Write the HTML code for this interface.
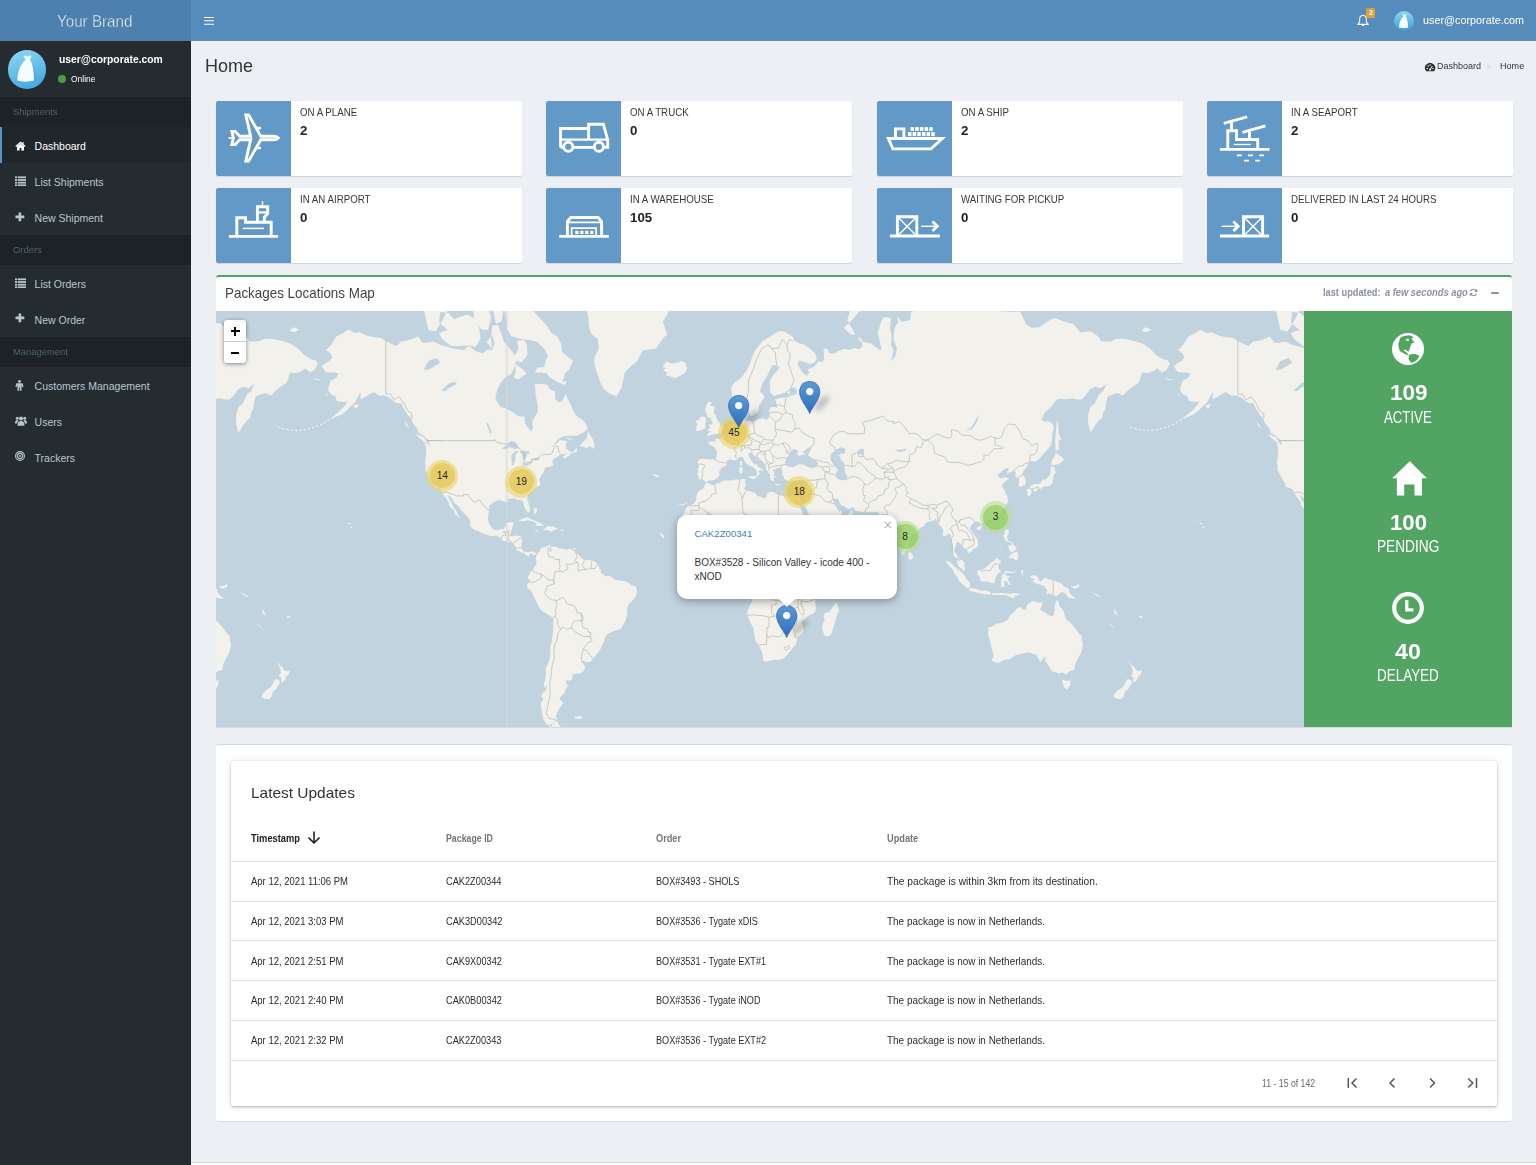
<!DOCTYPE html>
<html><head><meta charset="utf-8">
<style>
*{box-sizing:border-box;margin:0;padding:0}
html,body{width:1536px;height:1165px;overflow:hidden;background:#ecf0f5;font-family:"Liberation Sans",sans-serif;color:#333}
.a{position:absolute}
.t{position:absolute;line-height:1;white-space:nowrap}
svg{position:absolute;overflow:visible}
.sh{position:absolute;left:0;width:191px;height:30px;background:#1c2226}
.mi{position:absolute;left:0;width:191px;height:36px}
.ib{position:absolute;width:306px;height:75px;background:#fff;border-radius:2px;box-shadow:0 1px 1px rgba(0,0,0,.12)}
.ib .ic{position:absolute;left:0;top:0;width:75px;height:75px;background:#6399c6;border-radius:2px 0 0 2px}
.ib .ic svg{left:0;top:0}
.ib .l{position:absolute;left:84px;top:8.4px;font-size:9.75px;line-height:1;color:#333;white-space:nowrap}
.ib .n{position:absolute;left:84px;top:24.5px;font-size:13.2px;line-height:1;font-weight:700;color:#222}
.row{position:absolute;left:231px;width:1266px;height:1px;background:#e0e0e0}
.cell{position:absolute;font-size:9.8px;line-height:1;color:#333;white-space:nowrap}
.cl{position:absolute;border-radius:50%}
.ct{position:absolute;font-size:10.2px;line-height:1;color:#262626;text-align:center;width:32px}
</style></head><body>
<!-- top -->
<div class="a" style="left:0;top:0;width:191px;height:41px;background:#4d80ad"></div>
<div class="a" style="left:191px;top:0;width:1345px;height:41px;background:#558cbc"></div>
<!-- hamburger -->
<div class="a" style="left:203.8px;top:16.5px;width:10px;height:1.7px;background:#fff;border-radius:1px;box-shadow:0 3.35px 0 #fff,0 6.7px 0 #fff"></div>
<!-- bell -->
<svg style="left:1357px;top:14px" width="12" height="13" viewBox="0 0 12 13"><path d="M6,1.2 C3.6,1.2 2.6,3.2 2.6,5.4 L2.6,8 L0.8,10.4 L11.2,10.4 L9.4,8 L9.4,5.4 C9.4,3.2 8.4,1.2 6,1.2 Z" fill="none" stroke="#fff" stroke-width="1.1" stroke-linejoin="round"/><path d="M4.8,11 Q6,12.8 7.2,11" fill="#fff" stroke="#fff" stroke-width="0.8"/></svg>
<div class="a" style="left:1366px;top:7.5px;width:9.2px;height:10px;background:#e39e3a;border-radius:1.5px"></div>
<!-- top avatar -->
<div class="a" style="left:1393.7px;top:10.6px;width:20.5px;height:20.5px;border-radius:50%;background:linear-gradient(#8ad6ee,#3a9fdc)"></div>
<svg style="left:1393.7px;top:10.6px" width="21" height="21" viewBox="0 0 40 40"><path d="M23.5,13 C26,17 28.5,24 29.8,32.5 L25.5,32.8 C26,24 25.5,18 23.5,13 Z" fill="#5d9fd6" fill-opacity=".7"/><path d="M16,6.5 Q17.8,4.8 20.2,7 Q22.4,4.8 24,6.5 L22.4,10.1 C24.8,13 26.5,20 26.8,31.3 Q18,33.6 9.6,31.3 C9.8,22 13,14 18.2,10.1 Z" fill="#f7fbfe"/></svg>

<!-- sidebar -->
<div class="a" style="left:0;top:41px;width:191px;height:1124px;background:#242c30"></div>
<div class="a" style="left:7.7px;top:50px;width:38.6px;height:38.6px;border-radius:50%;background:linear-gradient(160deg,#8fdaf0,#3aa2de)"></div>
<svg style="left:7.7px;top:50px" width="39" height="39" viewBox="0 0 40 40"><path d="M23.5,13 C26,17 28.5,24 29.8,32.5 L25.5,32.8 C26,24 25.5,18 23.5,13 Z" fill="#5d9fd6" fill-opacity=".7"/><path d="M16,6.5 Q17.8,4.8 20.2,7 Q22.4,4.8 24,6.5 L22.4,10.1 C24.8,13 26.5,20 26.8,31.3 Q18,33.6 9.6,31.3 C9.8,22 13,14 18.2,10.1 Z" fill="#f7fbfe"/></svg>
<div class="a" style="left:58px;top:75.3px;width:7.6px;height:7.6px;border-radius:50%;background:#4f9a45"></div>

<div class="sh" style="top:97px"></div>
<div class="mi" style="top:127px;background:#20272b"></div>
<div class="a" style="left:0;top:127px;width:2px;height:36px;background:#5b92c4"></div>
<div class="sh" style="top:235px"></div>
<div class="sh" style="top:337px"></div>
<svg style="left:15px;top:140.5px" width="11" height="10" viewBox="0 0 11 10"><path d="M5.5,0.6 L0.4,5 L1.2,5.9 L5.5,2.2 L9.8,5.9 L10.6,5 L8.6,3.3 L8.6,1 L7.4,1 L7.4,2.2 Z" fill="#fff"/><path d="M2,5.4 L5.5,2.6 L9,5.4 L9,9.6 L6.4,9.6 L6.4,7 L4.6,7 L4.6,9.6 L2,9.6 Z" fill="#fff"/></svg><svg style="left:14.8px;top:175.8px" width="11" height="10" viewBox="0 0 11 10"><g fill="#b8c7ce"><rect x="0" y="0.4" width="2.2" height="1.8"/><rect x="0" y="3.1" width="2.2" height="1.8"/><rect x="0" y="5.8" width="2.2" height="1.8"/><rect x="0" y="8.4" width="2.2" height="1.6"/><rect x="2.8" y="0.4" width="8.2" height="1.8"/><rect x="2.8" y="3.1" width="8.2" height="1.8"/><rect x="2.8" y="5.8" width="8.2" height="1.8"/><rect x="2.8" y="8.4" width="8.2" height="1.6"/></g></svg><svg style="left:14.8px;top:277.8px" width="11" height="10" viewBox="0 0 11 10"><g fill="#b8c7ce"><rect x="0" y="0.4" width="2.2" height="1.8"/><rect x="0" y="3.1" width="2.2" height="1.8"/><rect x="0" y="5.8" width="2.2" height="1.8"/><rect x="0" y="8.4" width="2.2" height="1.6"/><rect x="2.8" y="0.4" width="8.2" height="1.8"/><rect x="2.8" y="3.1" width="8.2" height="1.8"/><rect x="2.8" y="5.8" width="8.2" height="1.8"/><rect x="2.8" y="8.4" width="8.2" height="1.6"/></g></svg><svg style="left:14.8px;top:211.6px" width="10" height="10" viewBox="0 0 10 10"><path d="M3.6,0.5 H6.2 V3.6 H9.3 V6.2 H6.2 V9.3 H3.6 V6.2 H0.5 V3.6 H3.6 Z" fill="#b8c7ce"/></svg><svg style="left:14.8px;top:313.4px" width="10" height="10" viewBox="0 0 10 10"><path d="M3.6,0.5 H6.2 V3.6 H9.3 V6.2 H6.2 V9.3 H3.6 V6.2 H0.5 V3.6 H3.6 Z" fill="#b8c7ce"/></svg><svg style="left:15.2px;top:379.5px" width="9" height="11" viewBox="0 0 9 11"><circle cx="4.5" cy="1.4" r="1.4" fill="#b8c7ce"/><path d="M1.4,3.3 H7.6 L8.6,7 L7.4,7.2 L6.6,4.8 L6.5,10.8 L4.9,10.8 L4.9,7.4 L4.1,7.4 L4.1,10.8 L2.5,10.8 L2.4,4.8 L1.6,7.2 L0.4,7 Z" fill="#b8c7ce"/></svg><svg style="left:14.6px;top:415.5px" width="12" height="10" viewBox="0 0 12 10"><g fill="#b8c7ce"><circle cx="6" cy="2.6" r="2"/><circle cx="2.3" cy="2.2" r="1.5"/><circle cx="9.7" cy="2.2" r="1.5"/><path d="M2.6,9.8 C2.6,6.2 3.8,5 6,5 C8.2,5 9.4,6.2 9.4,9.8 Z"/><path d="M0,7.6 C0,5 0.8,4 2.3,4 C3,4 3.4,4.3 3.6,4.6 C2.6,5.4 2.2,6.6 2.2,7.6 Z"/><path d="M12,7.6 C12,5 11.2,4 9.7,4 C9,4 8.6,4.3 8.4,4.6 C9.4,5.4 9.8,6.6 9.8,7.6 Z"/></g></svg><svg style="left:14.6px;top:451px" width="10" height="10" viewBox="0 0 10 10"><g fill="none" stroke="#b8c7ce" stroke-width="1.1"><circle cx="5" cy="5" r="4.4"/><circle cx="5" cy="5" r="2.6"/></g><circle cx="5" cy="5" r="1" fill="#b8c7ce"/></svg>

<!-- page header -->
<svg style="left:1424.6px;top:62.8px" width="10.2" height="8.4" viewBox="0 0 10.2 8.4"><path d="M1.05,8.2 A5.1,5.1 0 1 1 9.15,8.2 Z" fill="#2d2d2d"/><g fill="#ecf0f5"><circle cx="2.2" cy="5.6" r="0.75"/><circle cx="3.2" cy="2.9" r="0.75"/><circle cx="5.1" cy="1.9" r="0.75"/><circle cx="8" cy="5.6" r="0.75"/><circle cx="5.1" cy="6.6" r="1.1"/></g><path d="M5.1,6.6 L7.3,3" stroke="#ecf0f5" stroke-width="1"/></svg>

<!-- info boxes -->
<div class="ib" style="left:216px;top:101px"><div class="ic"><svg width="75" height="75" viewBox="0 0 75 75"><g fill="none" stroke="#fff" stroke-width="2.9" stroke-linejoin="miter" stroke-linecap="butt"><path d="M62.3,37 C61,35.6 59.5,35.2 57.5,35.2 L44.8,35.2 L32.6,13.9 L29.8,13.9 L34.6,35.2 L23.8,35.2 L19.2,30.4 L15.8,30.4 L17.4,37 L15.8,43.6 L19.2,43.6 L23.8,38.8 L34.6,38.8 L29.8,60.1 L32.6,60.1 L44.8,38.8 L57.5,38.8 C59.5,38.8 61,38.4 62.3,37 Z"/><path d="M12.5,37 L17,37" stroke-width="1.6"/><path d="M40.6,27 L45,27 M40.6,47 L45,47" stroke-width="2.4"/></g></svg></div></div>
<div class="ib" style="left:546.3px;top:101px"><div class="ic"><svg width="75" height="75" viewBox="0 0 75 75"><g fill="none" stroke="#fff" stroke-width="2.9" stroke-linejoin="miter" stroke-linecap="butt"><path d="M14.6,46.4 L14.6,27.5 L42.6,27.5 L42.6,38.6 M42.6,38.6 L42.6,23.3 L57.4,23.3 L61.7,38.6 L61.7,46.4 L56,46.4 M49.5,46.4 L26,46.4 M19,46.4 L14.6,46.4"/><path d="M14.6,38.6 L61.7,38.6" stroke-width="2.2"/><circle cx="22.3" cy="45.8" r="4.6" fill="#6399c6"/><circle cx="52.9" cy="45.8" r="4.6" fill="#6399c6"/></g></svg></div></div>
<div class="ib" style="left:876.5px;top:101px"><div class="ic"><svg width="75" height="75" viewBox="0 0 75 75"><g fill="none" stroke="#fff" stroke-width="2.9" stroke-linejoin="miter" stroke-linecap="butt"><path d="M11.3,37.5 L65.3,37.5 L54,47.9 L16,47.9 Z"/><path d="M18.5,37.5 L18.5,27.9 L26.9,27.9 L26.9,37.5"/><rect x="33.60" y="26.1" width="3.5" height="3.8" fill="#fff" stroke="none"/><rect x="38.25" y="26.1" width="3.5" height="3.8" fill="#fff" stroke="none"/><rect x="42.90" y="26.1" width="3.5" height="3.8" fill="#fff" stroke="none"/><rect x="47.55" y="26.1" width="3.5" height="3.8" fill="#fff" stroke="none"/><rect x="52.20" y="26.1" width="3.5" height="3.8" fill="#fff" stroke="none"/><rect x="31.00" y="31.1" width="3.5" height="4" fill="#fff" stroke="none"/><rect x="35.65" y="31.1" width="3.5" height="4" fill="#fff" stroke="none"/><rect x="40.30" y="31.1" width="3.5" height="4" fill="#fff" stroke="none"/><rect x="44.95" y="31.1" width="3.5" height="4" fill="#fff" stroke="none"/><rect x="49.60" y="31.1" width="3.5" height="4" fill="#fff" stroke="none"/><rect x="54.25" y="31.1" width="3.5" height="4" fill="#fff" stroke="none"/></g></svg></div></div>
<div class="ib" style="left:1206.8px;top:101px"><div class="ic"><svg width="75" height="75" viewBox="0 0 75 75"><g fill="none" stroke="#fff" stroke-width="2.9" stroke-linejoin="miter" stroke-linecap="butt"><path d="M12.9,48.4 L62.5,48.4"/><path d="M16.8,22.3 L40.2,15.9 M35.4,31.3 L58.4,24.9" stroke-width="2.9"/><path d="M24.5,21 L24.5,29.8 M42.5,28.5 L42.5,38.5"/><path d="M20.8,48.4 L20.8,29.8 L29.5,29.8 L29.5,38.5 L50.7,38.5 L50.7,48.4"/><path d="M26.7,43.5 L43.8,43.5" stroke-width="1.3"/><path d="M29.9,54.4 L34.8,54.4 M40.9,54.4 L46,54.4 M52.2,54.4 L57,54.4 M37,59.6 L41.9,59.6 M48.3,59.6 L53.1,59.6" stroke-width="1.6"/></g></svg></div></div>
<div class="ib" style="left:216px;top:188px"><div class="ic"><svg width="75" height="75" viewBox="0 0 75 75"><g fill="none" stroke="#fff" stroke-width="2.9" stroke-linejoin="miter" stroke-linecap="butt"><path d="M12.9,48.4 L62.1,48.4"/><path d="M20.8,48.4 L20.8,29.8 L29.5,29.8 L29.5,34.3 L55.2,34.3 L55.2,48.4"/><path d="M41.4,34.3 L41.4,18.8 L51.7,18.8 L51.7,25.6 L48.4,29 L48.4,34.3"/><path d="M41.4,24.4 L51.7,24.4" stroke-width="2.2"/><path d="M46.5,13.2 L46.5,18" stroke-width="1.4"/><path d="M26.7,40.4 L48,40.4" stroke-width="1.5"/></g></svg></div></div>
<div class="ib" style="left:546.3px;top:188px"><div class="ic"><svg width="75" height="75" viewBox="0 0 75 75"><g fill="none" stroke="#fff" stroke-width="2.9" stroke-linejoin="miter" stroke-linecap="butt"><path d="M13.2,48.4 L62.8,48.4"/><path d="M21.4,48.4 L21.4,33.6 L24.8,29.5 L52.2,29.5 L55.6,33.6 L55.6,48.4"/><path d="M21.4,34.3 L55.6,34.3" stroke-width="1.7"/><path d="M25.6,48 L25.6,40.1 L50.1,40.1 L50.1,48" stroke-width="1.7"/><rect x="29.30" y="42.8" width="3.2" height="3.2" fill="#fff" stroke="none"/><rect x="34.25" y="42.8" width="3.2" height="3.2" fill="#fff" stroke="none"/><rect x="39.20" y="42.8" width="3.2" height="3.2" fill="#fff" stroke="none"/><rect x="44.15" y="42.8" width="3.2" height="3.2" fill="#fff" stroke="none"/></g></svg></div></div>
<div class="ib" style="left:876.5px;top:188px"><div class="ic"><svg width="75" height="75" viewBox="0 0 75 75"><g fill="none" stroke="#fff" stroke-width="2.9" stroke-linejoin="miter" stroke-linecap="butt"><path d="M12.9,48 L62.8,48"/><path d="M20.4,48 L20.4,28.8 L39.8,28.8 L39.8,48"/><path d="M22,30.3 L38.3,46.5 M38.3,30.3 L22,46.5" stroke-width="1.4"/><path d="M44.1,38.3 L60,38.3" stroke-width="1.4"/><path d="M55.5,33.5 L60.3,38.3 L55.5,43.1" stroke-width="2.8"/></g></svg></div></div>
<div class="ib" style="left:1206.8px;top:188px"><div class="ic"><svg width="75" height="75" viewBox="0 0 75 75"><g fill="none" stroke="#fff" stroke-width="2.9" stroke-linejoin="miter" stroke-linecap="butt"><path d="M12.9,48 L62.1,48"/><path d="M36.5,48 L36.5,28.8 L55.6,28.8 L55.6,48"/><path d="M38,30.3 L54.1,46.5 M54.1,30.3 L38,46.5" stroke-width="1.4"/><path d="M14.5,38.3 L30.5,38.3" stroke-width="1.4"/><path d="M26.4,33.5 L31.2,38.3 L26.4,43.1" stroke-width="2.8"/></g></svg></div></div>

<!-- map box -->
<div class="a" style="left:216px;top:275px;width:1296px;height:452px;background:#fff;border-top:2.4px solid #52a462;border-radius:3px 3px 0 0;box-shadow:0 1px 1px rgba(0,0,0,.1)"></div>
<svg style="left:1469px;top:288px" width="9" height="9" viewBox="0 0 9 9"><path d="M7.6,3.4 A3.3,3.3 0 0 0 1.5,3.2 M1.4,5.6 A3.3,3.3 0 0 0 7.5,5.8" fill="none" stroke="#8c90a4" stroke-width="1.2"/><path d="M8.2,0.8 L8.2,4 L5,4 Z M0.8,8.2 L0.8,5 L4,5 Z" fill="#8c90a4"/></svg>
<div class="a" style="left:1491px;top:292px;width:7.6px;height:1.8px;background:#8c90a4;border-radius:1px"></div>
<div class="a" id="map" style="left:216px;top:311px;width:1088px;height:416px;background:#c0d3de;overflow:hidden"><svg width="1088" height="416" viewBox="0 0 1088 416" style="position:absolute;left:0;top:0"><path fill="#f2f1ec" d="M74.4,20.6 78.7,21.3 83.4,18.4 77.5,16.2 74.4,18.4 74.4,20.6ZM-361.8,171.6 -363.4,170.1 -366.0,168.0 -369.6,168.6 -369.3,165.0 -371.0,163.2 -369.8,159.5 -369.3,154.9 -370.5,150.4 -367.9,148.1 -362.7,148.1 -356.8,148.4 -352.8,148.8 -351.3,145.2 -351.3,140.1 -353.7,136.0 -355.6,134.9 -359.4,133.2 -359.6,131.0 -355.6,130.3 -352.3,131.0 -353.0,127.1 -351.3,128.1 -348.0,127.8 -345.2,125.2 -344.7,122.6 -342.3,121.9 -340.0,120.7 -338.6,118.4 -337.4,114.9 -335.5,113.4 -331.9,112.6 -329.1,112.6 -327.4,110.6 -328.1,104.8 -329.3,100.2 -328.1,97.6 -323.4,94.9 -323.6,98.0 -324.4,101.5 -322.7,100.6 -325.3,106.5 -322.5,110.6 -318.9,109.3 -314.7,111.0 -309.5,108.1 -304.7,107.3 -301.6,108.9 -298.3,105.7 -298.8,98.9 -297.4,95.8 -295.0,94.9 -291.0,97.1 -291.7,92.3 -292.9,88.2 -287.0,86.8 -282.2,86.8 -277.0,84.9 -280.3,82.0 -284.6,82.0 -289.3,83.5 -294.3,84.9 -298.1,81.1 -297.6,75.7 -298.6,70.6 -295.7,65.3 -290.5,59.3 -288.4,56.5 -291.2,54.2 -295.7,54.2 -298.1,59.3 -301.2,65.8 -304.7,70.6 -307.3,77.2 -307.8,81.1 -304.5,83.5 -303.8,86.8 -306.4,90.9 -309.2,94.5 -309.5,100.2 -310.9,101.9 -314.7,104.4 -317.7,104.8 -318.7,101.5 -320.6,94.5 -322.0,89.1 -323.6,87.7 -324.8,89.1 -328.4,92.7 -331.9,93.6 -335.2,90.5 -336.0,85.4 -336.7,79.6 -336.2,74.7 -333.1,71.1 -328.4,68.0 -324.8,64.2 -321.3,59.3 -318.2,53.0 -315.8,45.9 -313.0,39.6 -309.5,35.1 -305.9,30.4 -301.6,27.7 -297.6,25.6 -292.9,22.0 -288.1,19.9 -283.4,20.6 -278.7,23.5 -275.1,25.6 -274.0,29.1 -270.4,31.8 -263.3,33.8 -257.4,38.3 -252.6,42.8 -251.2,48.3 -253.8,51.8 -258.6,53.0 -264.5,50.7 -269.2,49.5 -270.4,53.0 -266.6,59.8 -264.5,62.6 -260.9,64.8 -258.6,60.9 -260.9,58.7 -254.3,55.9 -249.1,50.1 -245.5,51.3 -243.9,48.3 -244.4,37.7 -240.8,37.7 -238.5,42.2 -233.7,42.8 -230.2,40.3 -223.1,37.7 -219.5,39.0 -213.6,37.1 -208.9,38.3 -205.3,35.1 -206.5,30.4 -197.0,32.4 -189.9,37.7 -186.4,39.6 -188.0,31.1 -190.4,22.0 -186.4,9.2 -184.0,6.1 -176.9,6.9 -178.1,16.9 -176.2,24.9 -176.9,34.4 -174.5,39.6 -176.9,50.1 -172.9,45.9 -171.0,37.7 -174.5,27.7 -173.4,16.9 -169.8,10.8 -171.0,5.3 -166.3,10.8 -158.0,9.2 -156.8,1.1 -145.0,-3.1 -142.6,-13.8 -123.7,-21.4 -111.8,-31.5 -100.0,-36.9 -81.1,-21.4 -83.4,-7.4 -69.2,0.3 -55.0,1.1 -47.9,0.3 -42.0,13.1 -36.1,16.9 -29.0,16.2 -19.5,10.0 -13.6,6.9 -3.0,10.8 5.3,13.1 12.4,21.3 23.1,20.6 30.2,25.6 33.7,30.4 42.0,30.4 49.1,27.7 55.0,27.7 62.1,29.1 68.0,30.4 74.0,32.4 77.5,34.4 82.2,37.7 88.2,44.0 95.2,48.3 100.0,49.5 101.9,52.4 98.8,58.7 94.1,61.5 89.3,57.6 84.6,60.4 79.9,62.0 74.0,61.5 70.9,71.6 64.5,75.7 59.8,79.6 55.0,84.4 49.1,82.0 42.0,84.4 39.6,85.4 37.7,93.6 37.3,98.0 34.9,102.3 34.4,106.5 30.2,110.6 26.6,114.9 22.4,121.9 20.2,112.6 20.0,104.4 22.6,95.8 26.6,92.7 31.3,83.0 34.9,80.6 38.5,73.1 32.5,77.2 26.6,75.7 21.9,78.6 17.2,84.9 13.6,88.6 8.9,88.6 4.1,87.2 -3.0,88.2 -10.1,87.7 -13.6,91.4 -16.5,95.4 -23.1,101.5 -26.6,108.5 -23.6,110.6 -18.3,110.6 -14.8,113.8 -14.3,118.4 -16.0,124.1 -16.0,129.6 -17.2,134.9 -20.7,138.4 -24.3,142.5 -27.8,147.1 -32.5,150.7 -37.3,150.1 -39.7,152.3 -41.3,156.4 -44.4,159.5 -45.6,162.6 -42.3,168.6 -42.3,172.2 -43.2,174.2 -46.8,175.6 -49.6,175.6 -49.1,171.6 -49.1,167.1 -51.5,166.2 -53.1,164.1 -52.0,161.1 -54.3,159.9 -58.6,161.4 -61.7,163.2 -60.2,160.2 -59.1,158.0 -61.7,156.8 -65.7,159.9 -68.0,162.3 -69.9,162.9 -69.7,165.6 -67.1,167.4 -63.3,166.2 -58.6,167.7 -62.1,169.8 -65.0,172.7 -66.4,175.1 -63.3,179.3 -62.4,183.0 -60.0,185.8 -61.0,187.1 -59.5,189.1 -61.0,193.1 -63.3,196.6 -65.4,199.2 -66.9,201.9 -69.7,204.5 -72.8,207.0 -76.8,208.1 -79.2,208.8 -82.2,210.1 -85.8,211.1 -87.5,213.7 -88.6,211.1 -91.7,210.6 -94.1,211.4 -96.2,213.9 -98.1,217.2 -96.5,219.7 -94.6,222.9 -92.0,226.1 -90.3,230.0 -89.8,234.4 -91.0,236.3 -94.6,238.3 -96.5,240.2 -100.0,242.6 -100.5,239.7 -101.2,238.3 -104.0,237.3 -105.7,234.4 -107.6,232.7 -109.7,231.0 -111.8,231.2 -111.8,233.9 -113.7,238.3 -113.5,241.1 -111.1,243.3 -110.6,245.9 -108.3,246.9 -106.6,248.3 -103.8,251.6 -103.8,254.7 -102.6,259.4 -103.8,259.7 -106.4,257.8 -108.8,256.1 -110.4,253.1 -110.9,250.4 -111.1,247.8 -112.5,246.6 -114.7,244.2 -115.9,242.8 -115.4,239.2 -114.9,235.1 -116.1,231.5 -117.0,227.6 -117.5,223.4 -119.4,222.7 -122.5,225.1 -124.9,224.9 -125.3,223.4 -124.6,219.7 -125.8,217.2 -127.2,215.2 -129.3,213.2 -130.3,211.6 -131.2,208.6 -133.4,208.1 -134.3,209.6 -136.0,209.9 -138.1,210.4 -140.2,210.6 -142.8,212.7 -144.0,214.9 -146.9,216.2 -149.5,218.9 -153.7,222.9 -155.6,223.9 -158.5,225.4 -159.2,228.3 -158.5,231.2 -159.4,234.4 -159.6,238.5 -161.1,238.5 -163.2,241.9 -165.1,243.8 -167.2,241.9 -168.2,239.2 -169.3,235.6 -171.0,232.5 -172.2,228.3 -174.5,224.6 -175.5,220.9 -176.2,217.2 -176.2,213.4 -176.7,211.1 -176.9,209.1 -179.3,211.9 -181.6,212.7 -184.7,209.6 -185.7,208.1 -182.8,207.3 -184.7,205.5 -187.1,205.0 -188.8,203.2 -190.9,200.8 -195.9,201.3 -200.6,201.3 -203.0,201.6 -207.7,200.8 -212.9,199.8 -214.1,196.9 -215.5,196.3 -218.8,197.9 -221.9,197.1 -224.2,195.3 -227.1,193.9 -228.3,191.5 -229.7,188.5 -232.5,187.7 -234.9,188.8 -234.0,192.3 -232.1,195.8 -229.7,198.7 -228.7,201.3 -227.3,199.0 -226.4,201.1 -226.4,203.7 -224.0,203.9 -220.7,204.2 -217.4,201.3 -215.7,199.0 -215.0,201.9 -214.1,204.5 -211.5,205.5 -209.3,207.6 -207.0,208.3 -207.7,210.9 -210.0,213.4 -211.7,215.2 -211.9,217.4 -214.5,218.4 -217.1,220.2 -218.3,222.2 -225.0,225.1 -229.0,227.1 -232.5,228.8 -234.9,229.5 -238.5,231.0 -240.8,232.0 -243.2,232.7 -245.5,232.7 -246.3,231.0 -247.2,227.1 -247.4,223.4 -248.6,220.9 -250.3,218.4 -251.9,215.2 -254.3,212.7 -256.0,210.1 -256.2,207.6 -257.9,204.5 -259.8,202.4 -260.7,199.5 -262.1,197.1 -263.8,195.0 -265.4,193.4 -265.9,190.1 -266.6,192.6 -267.6,194.5 -269.0,192.9 -270.6,189.9 -271.6,188.5 -272.1,185.2 -267.6,184.9 -266.9,184.1 -265.9,181.6 -265.4,179.9 -264.5,177.6 -263.5,175.3 -263.8,172.7 -263.3,170.7 -263.3,168.9 -266.6,169.2 -268.0,171.0 -270.9,171.6 -274.0,169.5 -276.1,169.5 -278.7,170.7 -281.5,169.2 -283.9,167.7 -284.4,165.0 -286.3,163.8 -285.1,161.4 -286.5,159.5 -285.8,158.3 -287.0,157.1 -289.6,156.8 -292.2,157.4 -292.9,158.9 -294.8,158.0 -295.0,160.2 -293.6,161.7 -294.1,164.4 -291.7,165.6 -294.5,167.1 -293.8,170.1 -295.5,170.1 -297.1,168.9 -298.1,166.5 -297.9,164.1 -299.5,162.0 -300.9,160.5 -302.1,158.3 -302.4,154.2 -304.7,151.7 -307.1,150.1 -310.6,148.4 -312.5,145.8 -314.7,143.5 -316.1,141.5 -319.2,142.1 -319.4,144.8 -317.7,147.5 -315.6,151.4 -313.5,153.3 -310.4,153.6 -310.6,155.2 -308.3,156.4 -304.7,158.9 -305.2,160.2 -307.8,158.6 -309.5,160.8 -308.0,162.6 -309.5,164.4 -310.6,165.9 -311.6,165.0 -310.9,162.9 -311.6,159.5 -313.5,157.7 -315.6,155.8 -318.7,154.9 -322.0,152.0 -323.6,150.4 -324.4,147.1 -327.2,145.5 -330.0,147.5 -332.4,149.4 -336.7,148.8 -339.0,148.4 -341.2,150.1 -340.9,153.6 -343.5,155.5 -346.4,156.4 -348.5,159.9 -349.2,161.7 -348.0,163.5 -350.2,166.8 -352.8,168.6 -353.9,169.2 -358.9,169.5 -360.3,170.1 -361.8,171.6ZM2.5,275.8 7.7,274.8 11.2,272.9 11.2,276.0 6.5,277.9 2.5,275.8ZM-38.5,266.1 -34.9,263.9 -31.1,265.1 -27.8,270.8 -23.1,266.6 -19.5,268.4 -14.8,269.2 -7.7,272.0 -3.4,275.6 0.6,277.5 1.8,282.0 5.3,285.8 8.4,287.3 5.8,287.7 0.3,286.8 -2.7,282.2 -7.0,281.0 -9.1,283.2 -11.0,285.1 -14.8,284.6 -18.3,282.5 -21.9,283.0 -20.7,279.4 -24.3,274.6 -28.5,273.4 -32.5,272.2 -34.4,270.8 -36.1,269.4 -32.8,268.4 -38.5,266.1ZM23.1,280.8 29.0,283.2 33.7,286.3 30.2,285.6 23.1,280.8ZM-80.1,316.4 -79.2,320.2 -80.1,323.1 -78.7,327.6 -77.3,333.4 -76.3,336.9 -74.7,342.5 -74.7,346.7 -76.3,347.5 -76.1,349.5 -72.8,351.5 -69.2,351.8 -65.7,349.8 -62.1,348.4 -58.6,348.4 -55.0,345.8 -53.1,344.4 -49.8,343.8 -44.4,342.2 -38.5,341.6 -35.4,343.0 -31.8,343.6 -30.4,346.4 -27.6,350.9 -26.6,349.5 -24.3,347.2 -22.4,344.7 -22.8,348.1 -22.8,351.8 -21.2,351.2 -20.7,353.6 -18.3,355.9 -17.6,358.3 -15.5,360.4 -12.9,361.3 -8.6,362.8 -5.8,361.3 -4.2,362.2 -2.3,363.7 0.6,361.0 3.0,359.8 6.3,358.9 7.0,354.4 8.6,350.1 9.8,347.2 12.4,343.6 13.6,340.0 15.0,334.0 13.8,328.1 13.6,324.7 11.2,322.8 8.9,319.7 7.7,317.4 4.8,314.6 3.0,312.1 -1.3,308.8 -3.0,305.1 -4.4,300.1 -6.5,297.4 -8.6,295.2 -9.1,291.6 -11.2,288.5 -12.7,291.6 -13.4,295.2 -13.6,298.9 -14.1,302.8 -15.3,305.1 -17.9,304.8 -20.7,303.3 -23.6,301.1 -25.9,299.9 -27.8,298.4 -26.9,295.7 -25.2,292.1 -26.6,291.4 -30.2,291.6 -33.7,290.4 -35.4,289.7 -37.3,291.6 -40.1,292.8 -41.3,295.0 -42.0,298.4 -44.6,298.7 -47.0,296.5 -49.1,296.2 -51.7,297.9 -53.9,300.9 -56.2,303.1 -57.9,304.6 -59.3,306.8 -61.2,309.6 -65.7,311.6 -68.8,312.3 -71.6,312.8 -73.7,313.9 -77.0,315.9 -78.5,316.1 -80.1,316.4ZM70.9,304.6 74.2,305.1 73.7,306.8 71.1,306.6 70.9,304.6ZM39.6,311.8 43.2,313.9 46.7,317.2 44.4,315.9 39.6,311.8ZM60.2,349.8 62.1,352.1 64.5,355.0 66.8,355.9 67.8,358.9 70.4,360.1 74.0,359.5 72.5,363.7 70.4,364.9 69.5,368.0 66.4,371.5 64.7,370.5 65.7,367.4 62.8,364.3 64.7,361.9 64.7,358.9 63.1,355.3 60.2,349.8ZM60.2,368.0 63.1,369.2 64.0,371.8 61.6,375.6 60.2,378.2 56.9,380.5 55.7,385.6 53.4,387.9 49.8,387.9 45.5,385.9 46.3,383.2 49.8,379.2 55.0,375.9 56.9,372.7 58.6,368.9 60.2,368.0ZM-6.0,368.6 -1.8,369.9 2.5,369.2 2.5,373.4 1.3,375.9 -0.6,377.9 -3.0,377.6 -4.9,373.7 -6.0,370.2 -6.0,368.6ZM45.5,298.4 47.9,300.1 50.3,305.1 46.7,302.6 45.5,298.4ZM288.1,-7.4 314.2,-3.1 329.5,13.1 335.5,22.0 341.4,25.6 344.9,32.4 346.1,40.9 353.2,47.1 357.2,49.5 353.2,58.7 349.7,61.5 346.1,71.6 350.6,69.5 349.0,74.1 342.6,71.6 334.3,66.9 330.7,62.6 326.0,61.5 318.9,61.5 321.3,56.5 328.4,55.9 329.5,50.1 331.9,44.6 328.4,37.7 321.3,31.1 314.2,29.1 307.1,28.4 301.1,27.0 295.2,24.9 291.2,18.4 290.0,6.9 288.1,-7.4ZM317.7,196.9 321.3,197.7 320.1,201.9 318.2,203.9 317.7,196.9ZM206.5,-7.4 212.4,19.1 219.5,20.6 226.6,9.2 231.3,-0.5 224.2,-7.4 206.5,-7.4ZM302.3,209.9 307.1,207.3 311.8,206.5 315.4,208.1 320.8,210.6 324.6,212.1 328.1,214.2 326.0,214.9 319.6,214.9 320.6,212.7 317.5,210.6 310.6,209.3 308.2,210.6 304.7,209.9 302.3,209.9ZM283.4,-26.4 314.2,-26.4 313.0,-8.3 285.8,-10.1 283.4,-26.4ZM358.4,405.7 363.9,404.9 366.9,406.0 363.9,408.3 359.1,407.6 358.4,405.7ZM400.5,85.4 405.3,77.2 408.8,61.5 414.8,55.3 420.7,50.7 426.6,39.6 439.6,37.7 447.9,26.3 451.4,23.5 446.7,10.8 451.4,3.6 455.0,-11.9 459.7,-31.5 456.2,-67.4 361.5,-67.4 347.3,-48.3 333.1,-42.5 337.8,-29.5 349.7,-21.4 363.9,-19.5 368.6,-10.1 372.1,5.3 373.3,16.9 375.7,23.5 381.6,27.7 382.8,37.7 378.1,47.1 378.5,54.2 381.6,63.1 384.0,71.1 387.5,77.2 392.3,82.0 397.0,83.9 400.5,85.4ZM188.7,110.2 191.8,114.5 193.5,118.0 189.9,114.5 188.7,110.2ZM134.1,215.2 136.7,215.7 135.2,217.4 134.1,215.2ZM128.9,210.6 130.5,211.4 129.8,211.6 128.9,210.6ZM327.2,218.7 331.2,214.9 337.8,215.4 341.9,218.2 337.8,219.2 334.3,220.7 331.9,218.9 327.2,218.9 327.2,218.7ZM446.7,55.9 450.2,50.7 456.2,52.4 460.9,51.8 465.6,50.1 469.2,51.8 471.3,57.6 468.5,62.6 463.3,65.3 459.2,67.4 453.8,65.3 449.8,64.8 451.4,61.5 446.7,59.3 450.2,57.6 446.7,55.9ZM318.0,218.7 323.2,219.7 320.8,220.4 318.0,218.7ZM270.4,31.1 276.3,37.7 278.7,32.4 276.3,24.2 270.4,31.1ZM137.1,94.5 143.3,92.7 140.2,98.0 137.1,94.5ZM105.7,55.3 110.2,51.8 114.2,49.5 116.1,46.5 114.7,42.8 109.9,39.0 114.2,35.1 117.3,30.4 120.3,25.6 127.2,22.0 132.4,18.4 138.6,22.0 143.3,21.3 149.7,24.2 158.0,26.3 165.1,27.0 169.8,30.1 175.7,33.1 180.4,35.1 185.2,30.4 191.1,29.7 197.0,27.7 201.8,25.6 206.5,31.8 211.2,31.8 217.1,30.4 224.2,33.8 231.3,35.8 238.4,37.7 247.9,39.0 252.6,35.1 259.7,40.3 266.8,42.2 271.6,38.3 276.3,39.0 275.1,27.7 276.3,14.6 282.2,13.9 285.8,24.2 288.1,31.1 291.7,35.1 295.2,39.6 298.8,44.6 302.3,37.7 301.1,29.7 308.2,29.1 311.1,34.4 311.3,44.0 305.9,51.3 300.0,50.1 298.8,55.9 295.2,63.1 289.3,66.4 284.6,72.1 281.0,79.6 279.4,86.8 281.0,90.5 284.6,96.3 289.3,97.1 295.2,100.2 302.3,105.2 308.7,105.7 309.0,112.6 311.8,116.5 315.4,120.7 316.8,116.5 316.3,109.8 321.7,101.0 321.7,94.5 320.1,86.8 319.4,80.6 318.9,73.1 324.8,73.1 330.7,73.6 334.3,78.6 339.0,80.6 339.0,87.7 342.6,91.4 346.1,90.0 349.7,83.0 352.0,88.2 355.6,95.8 358.0,101.5 361.5,105.7 366.2,108.5 369.8,112.6 371.7,117.7 368.6,120.7 361.5,124.8 353.2,124.8 346.1,125.6 341.4,128.9 336.6,135.3 335.0,137.4 339.0,133.9 343.8,128.9 351.3,130.0 349.7,133.9 350.1,137.4 354.4,140.8 359.1,141.5 361.5,139.8 360.3,136.7 358.0,139.8 353.2,144.8 347.8,148.1 347.1,145.2 350.9,142.5 344.9,143.2 341.4,145.8 337.4,148.1 336.2,151.4 337.8,153.9 334.3,155.5 329.5,156.8 328.4,158.0 327.9,161.1 326.0,163.2 324.8,165.6 323.2,168.3 324.6,173.6 321.7,175.6 317.7,177.9 314.6,181.0 311.8,183.8 311.1,188.0 313.0,193.4 314.2,197.9 313.2,201.3 311.6,201.6 309.9,199.0 307.8,195.0 307.5,191.2 304.7,188.5 301.6,189.3 298.8,187.4 294.1,187.4 291.4,188.0 292.4,190.7 289.3,191.0 285.8,189.6 281.5,189.3 278.7,190.7 274.4,193.4 273.0,195.8 273.5,199.2 272.3,203.2 272.0,209.1 273.5,213.4 276.5,217.7 279.9,219.2 284.6,218.2 287.7,217.9 289.6,214.9 289.8,212.1 295.2,210.9 297.8,211.4 296.4,215.9 295.7,218.9 294.5,222.2 293.1,224.9 296.4,225.1 301.1,224.6 304.7,225.6 306.6,227.3 305.6,232.0 305.4,236.3 306.1,238.5 309.4,241.1 313.0,241.1 315.4,240.2 318.2,240.9 320.6,242.8 320.3,244.2 318.2,243.5 318.0,245.0 315.4,242.1 313.5,243.3 313.2,245.7 310.4,244.0 307.5,243.3 305.4,241.6 303.0,239.7 300.7,239.5 300.4,236.8 298.1,233.7 295.7,231.5 291.7,231.0 286.9,229.8 284.1,227.3 281.0,224.4 277.5,225.1 273.9,224.9 270.4,223.6 265.6,221.9 262.1,219.9 258.6,218.9 255.0,216.2 253.6,213.2 254.5,210.4 253.1,207.8 250.5,204.7 247.2,201.3 244.6,198.2 241.7,194.5 238.0,191.8 235.8,187.1 231.8,183.8 233.5,188.5 235.6,191.5 237.7,196.6 240.8,200.6 242.2,203.9 244.4,206.5 242.7,206.0 238.9,203.2 238.0,199.5 235.1,197.1 232.8,194.2 233.2,192.3 230.9,188.8 229.0,186.0 227.1,183.3 226.1,181.3 224.5,178.5 223.1,177.3 218.1,175.9 217.1,172.7 214.8,168.9 213.6,166.2 212.4,164.4 210.5,160.8 209.3,158.6 209.8,154.9 208.9,150.7 209.8,145.2 210.3,139.4 209.8,135.6 208.4,131.7 211.9,132.5 213.6,134.9 212.9,129.6 210.0,127.1 206.7,124.1 202.9,122.2 201.0,117.3 197.0,112.6 195.1,107.3 192.3,104.4 188.7,98.9 185.2,92.3 180.4,92.3 177.4,90.0 172.6,86.3 168.6,84.4 162.9,84.4 158.0,81.1 153.2,83.5 149.7,85.8 144.2,88.2 144.9,81.1 141.4,86.8 139.0,91.4 134.3,95.8 130.3,99.7 126.0,103.2 121.3,105.2 116.6,107.3 113.5,108.5 116.6,105.7 121.0,102.3 124.8,98.9 129.6,93.6 131.5,90.5 127.2,90.9 120.6,90.0 119.6,85.4 115.4,83.5 112.5,80.6 112.3,76.7 114.7,69.5 120.1,66.9 122.5,62.6 118.7,61.5 114.2,61.5 109.7,60.9 105.7,55.3ZM363.2,134.6 370.7,127.4 371.9,120.0 376.6,127.8 378.8,134.9 376.6,138.1 374.5,134.9 370.5,137.0 363.2,134.6ZM108.7,83.5 111.8,83.5 111.1,84.9 108.7,83.5ZM350.9,126.3 357.2,128.9 355.6,129.6 351.1,127.4 350.9,126.3ZM257.4,-7.4 270.4,-7.4 275.1,6.9 272.0,19.1 265.6,18.4 257.8,9.2 257.4,-7.4ZM344.2,218.4 348.2,218.9 347.3,219.9 344.5,219.7 344.2,218.4ZM320.6,242.8 321.7,242.6 323.4,240.7 324.6,238.0 326.5,236.6 329.3,236.1 332.6,234.6 334.5,233.4 334.3,236.8 333.3,237.8 334.0,241.4 335.5,240.2 335.2,235.8 337.4,235.4 339.3,235.6 341.9,237.0 346.8,237.8 350.9,238.7 353.2,237.8 356.8,237.8 355.1,238.7 358.0,240.2 359.6,242.6 362.0,243.3 365.0,246.4 368.1,249.0 372.1,249.0 375.7,249.5 378.5,250.4 381.6,253.1 382.8,254.7 383.7,258.3 385.4,258.7 384.5,261.8 387.5,263.5 388.7,265.6 392.3,264.7 395.8,266.1 398.7,268.7 402.2,269.2 406.0,269.9 409.3,269.9 412.6,271.8 415.5,274.4 419.7,275.3 420.9,279.6 420.4,284.4 417.8,288.0 415.2,291.1 412.6,293.8 411.2,297.2 411.2,302.4 410.3,306.3 409.3,310.3 406.7,315.1 404.1,318.7 400.5,319.0 397.0,320.5 392.7,322.3 389.2,325.7 388.2,330.7 386.6,333.7 384.2,338.6 381.4,342.5 378.1,346.4 376.2,349.2 373.6,351.2 370.5,351.2 367.4,349.8 365.3,348.4 365.0,350.1 368.1,353.8 369.1,356.2 367.2,360.7 363.9,362.5 358.0,363.1 356.1,364.3 356.5,368.3 353.5,369.6 349.7,369.6 350.9,373.7 352.7,375.3 350.9,375.9 349.0,379.9 348.0,382.5 344.0,386.2 343.5,387.9 347.5,392.1 344.2,396.4 341.4,400.8 339.7,404.9 341.4,409.1 337.8,410.7 335.5,415.4 330.7,413.4 327.2,407.6 325.5,400.0 324.8,392.8 327.2,387.6 325.1,385.6 327.4,381.2 330.3,379.2 331.0,374.3 328.4,376.9 327.9,372.7 329.1,368.9 330.0,361.9 329.3,358.0 331.7,353.3 333.6,348.1 334.5,343.0 334.0,338.0 334.5,334.2 335.7,330.7 336.6,324.1 337.1,317.7 337.4,311.3 337.1,307.3 334.3,305.1 330.3,302.6 325.5,299.6 322.9,296.2 320.8,291.6 318.2,286.8 316.1,281.5 313.5,278.4 311.3,276.8 311.1,273.2 313.5,271.1 314.6,269.2 312.3,268.2 312.0,265.4 314.2,262.1 314.6,260.6 317.0,259.2 317.7,256.8 320.3,253.5 320.3,250.0 319.8,246.9 320.6,242.8ZM276.3,-7.4 288.1,-7.4 285.8,10.0 279.9,13.1 276.3,-7.4ZM299.5,53.0 305.9,57.6 310.6,62.6 302.3,68.5 297.6,66.4 299.5,61.5 299.5,53.0ZM96.9,66.9 103.5,68.5 104.2,69.5 97.6,68.0 96.9,66.9ZM341.1,409.9 341.9,419.1 344.9,419.5 349.2,419.5 346.1,417.1 342.6,413.4 341.1,409.9 337.8,411.5 333.1,414.6 334.3,418.7 339.0,420.8 341.9,419.1ZM357.0,237.3 359.1,237.3 359.1,239.0 357.0,239.0 357.0,237.3ZM199.6,123.0 207.7,126.0 211.7,132.1 208.1,131.0 201.8,125.6 199.6,123.0ZM224.2,1.1 232.5,2.0 238.4,8.5 243.2,6.1 251.4,3.6 256.2,6.1 263.3,16.9 264.5,27.7 259.7,35.8 251.4,34.4 243.2,35.1 234.9,35.1 226.6,28.4 222.8,22.0 231.3,19.1 223.1,11.6 224.2,1.1ZM926.4,20.6 930.7,21.3 935.4,18.4 929.5,16.2 926.4,18.4 926.4,20.6ZM641.5,141.8 645.0,143.5 647.9,145.2 647.9,138.4 645.0,137.4 642.0,140.1 641.5,141.8ZM761.5,259.4 762.9,258.3 766.2,258.7 770.9,255.4 774.5,252.1 778.0,250.0 780.4,246.4 785.6,250.4 782.8,252.8 782.3,257.1 785.1,260.6 781.6,263.0 779.5,266.6 779.2,270.6 777.6,272.5 774.5,271.5 770.9,270.6 767.9,270.8 764.3,269.9 763.8,266.6 761.5,263.5 761.5,259.4ZM523.9,150.4 526.0,150.1 526.0,154.5 524.3,154.9 523.9,150.4ZM559.1,172.7 565.7,173.6 562.0,174.8 559.1,173.6 559.1,172.7ZM579.9,174.2 585.4,172.4 584.0,175.6 580.4,175.3 579.9,174.2ZM490.2,171.6 488.6,170.1 486.0,168.0 482.4,168.6 482.7,165.0 481.0,163.2 482.2,159.5 482.7,154.9 481.5,150.4 484.1,148.1 489.3,148.1 495.2,148.4 499.2,148.8 500.7,145.2 500.7,140.1 498.3,136.0 496.4,134.9 492.6,133.2 492.4,131.0 496.4,130.3 499.7,131.0 499.0,127.1 500.7,128.1 504.0,127.8 506.8,125.2 507.3,122.6 509.7,121.9 512.0,120.7 513.4,118.4 514.6,114.9 516.5,113.4 520.1,112.6 522.9,112.6 524.6,110.6 523.9,104.8 522.7,100.2 523.9,97.6 528.6,94.9 528.4,98.0 527.6,101.5 529.3,100.6 526.7,106.5 529.5,110.6 533.1,109.3 537.3,111.0 542.5,108.1 547.3,107.3 550.4,108.9 553.7,105.7 553.2,98.9 554.6,95.8 557.0,94.9 561.0,97.1 560.3,92.3 559.1,88.2 565.0,86.8 569.8,86.8 575.0,84.9 571.7,82.0 567.4,82.0 562.7,83.5 557.7,84.9 553.9,81.1 554.4,75.7 553.4,70.6 556.3,65.3 561.5,59.3 563.6,56.5 560.8,54.2 556.3,54.2 553.9,59.3 550.8,65.8 547.3,70.6 544.7,77.2 544.2,81.1 547.5,83.5 548.2,86.8 545.6,90.9 542.8,94.5 542.5,100.2 541.1,101.9 537.3,104.4 534.3,104.8 533.3,101.5 531.4,94.5 530.0,89.1 528.4,87.7 527.2,89.1 523.6,92.7 520.1,93.6 516.8,90.5 516.0,85.4 515.3,79.6 515.8,74.7 518.9,71.1 523.6,68.0 527.2,64.2 530.7,59.3 533.8,53.0 536.2,45.9 539.0,39.6 542.5,35.1 546.1,30.4 550.4,27.7 554.4,25.6 559.1,22.0 563.9,19.9 568.6,20.6 573.3,23.5 576.9,25.6 578.0,29.1 581.6,31.8 588.7,33.8 594.6,38.3 599.4,42.8 600.8,48.3 598.2,51.8 593.4,53.0 587.5,50.7 582.8,49.5 581.6,53.0 585.4,59.8 587.5,62.6 591.1,64.8 593.4,60.9 591.1,58.7 597.7,55.9 602.9,50.1 606.5,51.3 608.1,48.3 607.6,37.7 611.2,37.7 613.5,42.2 618.3,42.8 621.8,40.3 628.9,37.7 632.5,39.0 638.4,37.1 643.1,38.3 646.7,35.1 645.5,30.4 655.0,32.4 662.1,37.7 665.6,39.6 664.0,31.1 661.6,22.0 665.6,9.2 668.0,6.1 675.1,6.9 673.9,16.9 675.8,24.9 675.1,34.4 677.5,39.6 675.1,50.1 679.1,45.9 681.0,37.7 677.5,27.7 678.6,16.9 682.2,10.8 681.0,5.3 685.7,10.8 694.0,9.2 695.2,1.1 707.0,-3.1 709.4,-13.8 728.3,-21.4 740.2,-31.5 752.0,-36.9 770.9,-21.4 768.6,-7.4 782.8,0.3 797.0,1.1 804.1,0.3 810.0,13.1 815.9,16.9 823.0,16.2 832.5,10.0 838.4,6.9 849.0,10.8 857.3,13.1 864.4,21.3 875.1,20.6 882.2,25.6 885.7,30.4 894.0,30.4 901.1,27.7 907.0,27.7 914.1,29.1 920.0,30.4 926.0,32.4 929.5,34.4 934.2,37.7 940.2,44.0 947.2,48.3 952.0,49.5 953.9,52.4 950.8,58.7 946.1,61.5 941.3,57.6 936.6,60.4 931.9,62.0 926.0,61.5 922.9,71.6 916.5,75.7 911.8,79.6 907.0,84.4 901.1,82.0 894.0,84.4 891.6,85.4 889.7,93.6 889.3,98.0 886.9,102.3 886.4,106.5 882.2,110.6 878.6,114.9 874.4,121.9 872.2,112.6 872.0,104.4 874.6,95.8 878.6,92.7 883.3,83.0 886.9,80.6 890.5,73.1 884.5,77.2 878.6,75.7 873.9,78.6 869.2,84.9 865.6,88.6 860.9,88.6 856.1,87.2 849.0,88.2 841.9,87.7 838.4,91.4 835.5,95.4 828.9,101.5 825.4,108.5 828.4,110.6 833.7,110.6 837.2,113.8 837.7,118.4 836.0,124.1 836.0,129.6 834.8,134.9 831.3,138.4 827.7,142.5 824.2,147.1 819.5,150.7 814.7,150.1 812.3,152.3 810.7,156.4 807.6,159.5 806.4,162.6 809.7,168.6 809.7,172.2 808.8,174.2 805.2,175.6 802.4,175.6 802.9,171.6 802.9,167.1 800.5,166.2 798.9,164.1 800.0,161.1 797.7,159.9 793.4,161.4 790.3,163.2 791.8,160.2 792.9,158.0 790.3,156.8 786.3,159.9 784.0,162.3 782.1,162.9 782.3,165.6 784.9,167.4 788.7,166.2 793.4,167.7 789.9,169.8 787.0,172.7 785.6,175.1 788.7,179.3 789.6,183.0 792.0,185.8 791.0,187.1 792.5,189.1 791.0,193.1 788.7,196.6 786.6,199.2 785.1,201.9 782.3,204.5 779.2,207.0 775.2,208.1 772.8,208.8 769.8,210.1 766.2,211.1 764.5,213.7 763.4,211.1 760.3,210.6 757.9,211.4 755.8,213.9 753.9,217.2 755.5,219.7 757.4,222.9 760.0,226.1 761.7,230.0 762.2,234.4 761.0,236.3 757.4,238.3 755.5,240.2 752.0,242.6 751.5,239.7 750.8,238.3 748.0,237.3 746.3,234.4 744.4,232.7 742.3,231.0 740.2,231.2 740.2,233.9 738.3,238.3 738.5,241.1 740.9,243.3 741.4,245.9 743.7,246.9 745.4,248.3 748.2,251.6 748.2,254.7 749.4,259.4 748.2,259.7 745.6,257.8 743.2,256.1 741.6,253.1 741.1,250.4 740.9,247.8 739.5,246.6 737.3,244.2 736.1,242.8 736.6,239.2 737.1,235.1 735.9,231.5 735.0,227.6 734.5,223.4 732.6,222.7 729.5,225.1 727.1,224.9 726.7,223.4 727.4,219.7 726.2,217.2 724.8,215.2 722.7,213.2 721.7,211.6 720.8,208.6 718.6,208.1 717.7,209.6 716.0,209.9 713.9,210.4 711.8,210.6 709.2,212.7 708.0,214.9 705.1,216.2 702.5,218.9 698.3,222.9 696.4,223.9 693.5,225.4 692.8,228.3 693.5,231.2 692.6,234.4 692.4,238.5 690.9,238.5 688.8,241.9 686.9,243.8 684.8,241.9 683.8,239.2 682.7,235.6 681.0,232.5 679.8,228.3 677.5,224.6 676.5,220.9 675.8,217.2 675.8,213.4 675.3,211.1 675.1,209.1 672.7,211.9 670.4,212.7 667.3,209.6 666.3,208.1 669.2,207.3 667.3,205.5 664.9,205.0 663.2,203.2 661.1,200.8 656.1,201.3 651.4,201.3 649.0,201.6 644.3,200.8 639.1,199.8 637.9,196.9 636.5,196.3 633.2,197.9 630.1,197.1 627.8,195.3 624.9,193.9 623.7,191.5 622.3,188.5 619.5,187.7 617.1,188.8 618.0,192.3 619.9,195.8 622.3,198.7 623.3,201.3 624.7,199.0 625.6,201.1 625.6,203.7 628.0,203.9 631.3,204.2 634.6,201.3 636.3,199.0 637.0,201.9 637.9,204.5 640.5,205.5 642.7,207.6 645.0,208.3 644.3,210.9 642.0,213.4 640.3,215.2 640.1,217.4 637.5,218.4 634.9,220.2 633.7,222.2 627.0,225.1 623.0,227.1 619.5,228.8 617.1,229.5 613.5,231.0 611.2,232.0 608.8,232.7 606.5,232.7 605.7,231.0 604.8,227.1 604.6,223.4 603.4,220.9 601.7,218.4 600.1,215.2 597.7,212.7 596.0,210.1 595.8,207.6 594.1,204.5 592.2,202.4 591.3,199.5 589.9,197.1 588.2,195.0 586.6,193.4 586.1,190.1 585.4,192.6 584.4,194.5 583.0,192.9 581.4,189.9 580.4,188.5 579.9,185.2 584.4,184.9 585.1,184.1 586.1,181.6 586.6,179.9 587.5,177.6 588.5,175.3 588.2,172.7 588.7,170.7 588.7,168.9 585.4,169.2 584.0,171.0 581.1,171.6 578.0,169.5 575.9,169.5 573.3,170.7 570.5,169.2 568.1,167.7 567.6,165.0 565.7,163.8 566.9,161.4 565.5,159.5 566.2,158.3 565.0,157.1 562.4,156.8 559.8,157.4 559.1,158.9 557.2,158.0 557.0,160.2 558.4,161.7 557.9,164.4 560.3,165.6 557.5,167.1 558.2,170.1 556.5,170.1 554.9,168.9 553.9,166.5 554.1,164.1 552.5,162.0 551.1,160.5 549.9,158.3 549.6,154.2 547.3,151.7 544.9,150.1 541.4,148.4 539.5,145.8 537.3,143.5 535.9,141.5 532.8,142.1 532.6,144.8 534.3,147.5 536.4,151.4 538.5,153.3 541.6,153.6 541.4,155.2 543.7,156.4 547.3,158.9 546.8,160.2 544.2,158.6 542.5,160.8 544.0,162.6 542.5,164.4 541.4,165.9 540.4,165.0 541.1,162.9 540.4,159.5 538.5,157.7 536.4,155.8 533.3,154.9 530.0,152.0 528.4,150.4 527.6,147.1 524.8,145.5 522.0,147.5 519.6,149.4 515.3,148.8 513.0,148.4 510.8,150.1 511.1,153.6 508.5,155.5 505.6,156.4 503.5,159.9 502.8,161.7 504.0,163.5 501.8,166.8 499.2,168.6 498.1,169.2 493.1,169.5 491.7,170.1 490.2,171.6ZM490.0,125.6 493.6,124.5 496.4,123.4 501.1,123.0 506.8,121.5 505.9,119.2 507.5,116.1 504.2,114.1 503.7,112.2 500.7,108.1 499.7,104.0 497.6,101.9 499.0,95.8 495.7,94.9 494.0,94.1 496.4,90.9 491.7,90.9 490.0,95.8 488.8,99.3 490.5,102.3 491.7,106.5 495.5,106.9 495.0,109.8 496.6,111.4 496.4,113.4 492.6,113.4 493.8,115.3 493.3,117.7 491.0,119.2 495.5,120.7 493.3,121.5 490.0,125.6ZM760.5,216.7 765.0,214.4 766.2,215.4 763.8,218.9 760.8,218.4 760.5,216.7ZM805.2,258.7 807.6,259.9 806.4,263.0 807.9,264.9 805.5,264.2 805.2,258.7ZM834.8,154.5 837.7,153.9 842.6,153.3 848.1,149.1 846.4,146.5 839.6,141.8 838.6,145.8 836.0,149.1 834.8,154.5ZM813.3,177.3 815.9,173.6 819.5,173.0 823.7,172.7 827.3,168.0 828.4,169.2 831.3,167.1 834.1,163.5 834.8,158.9 834.8,155.8 837.9,155.5 839.3,159.5 839.6,162.0 837.2,165.0 837.2,168.9 836.3,172.4 834.4,174.5 832.0,175.3 827.7,175.6 825.8,177.3 823.5,177.9 822.3,175.3 819.5,176.2 816.4,177.6 813.3,177.3ZM489.3,117.7 488.4,117.7 484.6,119.6 479.8,120.0 480.3,116.1 481.5,113.4 479.6,109.8 483.4,108.5 484.1,105.7 489.1,105.7 490.5,109.3 489.1,112.6 489.3,117.7ZM752.5,279.1 754.4,277.0 759.8,277.7 764.8,279.4 770.0,279.4 774.7,281.3 774.2,283.7 766.2,282.7 760.3,281.5 755.3,280.6 752.5,279.1ZM810.5,178.2 813.5,177.6 815.9,180.2 814.2,184.7 811.6,185.8 811.4,181.6 810.5,178.2ZM775.7,282.5 785.1,282.0 794.6,282.7 799.3,282.0 804.8,283.0 799.3,285.6 797.0,287.3 789.9,284.1 782.8,284.1 776.1,283.9 775.7,282.5ZM788.7,218.4 792.9,218.4 792.7,222.2 791.0,225.9 792.2,229.5 797.0,232.0 796.3,233.2 793.4,231.0 789.9,230.3 788.9,228.3 787.0,224.6 788.4,223.6 788.7,218.4ZM792.2,246.4 795.8,242.8 800.5,240.2 802.6,244.0 802.2,248.1 800.0,249.5 797.0,247.3 792.2,246.4ZM854.5,275.8 859.7,274.8 863.2,272.9 863.2,276.0 858.5,277.9 854.5,275.8ZM813.5,266.1 817.1,263.9 820.9,265.1 824.2,270.8 828.9,266.6 832.5,268.4 837.2,269.2 844.3,272.0 848.6,275.6 852.6,277.5 853.8,282.0 857.3,285.8 860.4,287.3 857.8,287.7 852.3,286.8 849.3,282.2 845.0,281.0 842.9,283.2 841.0,285.1 837.2,284.6 833.7,282.5 830.1,283.0 831.3,279.4 827.7,274.6 823.5,273.4 819.5,272.2 817.6,270.8 815.9,269.4 819.2,268.4 813.5,266.1ZM627.8,16.9 634.9,23.5 639.6,23.5 631.3,9.2 636.0,-7.4 650.2,-21.4 666.8,-31.5 657.3,-16.6 643.1,1.1 636.0,9.2 630.1,14.6 627.8,16.9ZM780.9,243.3 786.6,236.3 785.1,238.7 780.9,243.3ZM839.6,140.1 843.1,138.4 842.6,128.5 846.0,129.6 842.4,122.2 842.4,113.4 841.0,109.3 840.0,118.4 839.1,131.4 839.6,140.1ZM523.1,156.1 526.7,156.4 526.2,162.3 523.4,162.6 523.1,156.1ZM817.1,177.9 822.1,176.8 821.1,179.6 818.3,180.7 817.1,177.9ZM532.8,165.3 540.4,164.7 539.2,168.6 533.3,166.8 532.8,165.3ZM875.1,280.8 881.0,283.2 885.7,286.3 882.2,285.6 875.1,280.8ZM692.6,239.7 695.0,241.6 697.3,245.2 696.6,247.8 694.0,249.0 692.4,246.9 692.6,239.7ZM785.1,276.0 788.4,276.3 788.2,269.9 790.3,269.9 792.9,273.9 794.8,274.1 791.5,267.3 794.8,265.4 791.0,265.1 787.7,261.8 789.9,259.9 797.0,260.9 799.8,259.2 798.1,262.1 788.7,262.1 786.3,263.5 785.1,270.1 785.1,276.0ZM729.0,249.7 734.2,250.7 737.3,254.5 741.4,258.0 743.7,259.4 747.0,262.8 749.2,265.4 750.8,268.7 753.9,271.5 754.1,276.8 751.1,277.0 745.6,272.5 742.5,268.9 740.6,264.9 738.0,262.3 736.9,258.7 733.8,255.4 731.4,252.8 729.0,249.7ZM789.9,201.3 792.2,201.9 789.9,209.6 788.0,207.0 789.9,201.3ZM642.0,25.6 646.7,29.1 644.3,31.1 642.0,25.6ZM792.2,234.9 797.0,233.2 800.5,236.8 799.3,239.2 795.8,241.6 793.4,239.7 792.2,234.9ZM580.4,188.5 579.9,184.9 576.9,184.1 574.5,184.9 572.1,186.0 568.6,185.2 563.1,184.1 560.3,183.0 557.9,181.3 554.4,180.5 550.8,182.7 550.4,185.8 548.5,187.7 546.1,186.3 541.4,184.9 539.5,182.2 535.5,180.7 530.7,179.6 527.9,177.9 529.1,175.9 529.8,173.9 528.6,170.4 529.8,168.3 527.6,168.0 526.7,167.7 523.6,168.9 520.1,168.3 515.3,169.5 511.8,169.2 507.0,169.8 503.5,171.9 500.7,172.4 498.3,174.2 495.0,173.6 491.7,171.9 491.0,171.9 489.5,172.2 488.6,174.5 487.2,177.3 485.5,178.5 483.1,179.6 481.5,181.9 480.3,185.2 480.5,187.7 479.4,190.4 477.2,192.9 473.0,194.2 471.8,195.0 469.2,198.7 468.2,201.9 466.8,203.9 465.4,205.2 464.7,208.3 463.0,212.1 463.5,213.4 465.2,215.4 465.2,218.4 465.4,220.9 464.5,224.1 463.7,227.1 462.1,227.8 463.5,230.0 464.0,232.9 465.2,234.9 467.3,236.1 468.7,237.5 471.1,239.5 472.5,241.6 473.9,244.5 476.3,246.6 478.6,248.3 481.5,250.4 485.0,252.6 485.8,252.7 489.3,251.4 492.6,250.7 496.6,251.2 498.8,251.6 501.1,250.4 504.7,249.2 507.3,248.3 510.6,247.8 514.1,248.1 515.8,249.5 517.5,252.8 520.1,252.6 523.1,252.1 525.3,253.8 526.7,255.9 526.7,258.5 525.7,260.6 525.5,263.5 524.8,265.4 527.2,268.9 530.0,272.2 531.9,274.8 532.6,277.5 534.0,280.3 535.2,283.7 534.5,286.3 536.2,289.0 535.9,291.6 533.3,295.0 532.4,297.9 531.4,301.4 531.4,304.6 533.1,308.6 535.2,313.3 537.3,316.7 537.8,319.0 538.1,323.1 538.8,326.8 539.7,330.2 542.5,333.7 544.0,337.2 545.6,340.2 546.6,344.1 547.0,348.1 547.3,349.8 549.9,350.9 552.3,350.1 555.1,349.5 557.9,348.7 561.5,348.9 564.1,348.7 567.2,347.5 570.0,345.3 572.6,342.2 575.4,338.9 577.6,335.6 579.7,334.0 580.7,330.7 581.4,326.8 580.9,325.7 582.8,324.9 586.3,322.8 587.5,320.8 587.5,316.9 586.8,314.4 585.6,310.8 588.7,308.3 592.2,304.8 597.0,302.8 599.4,300.4 599.8,297.7 599.6,293.5 599.1,288.7 597.5,285.6 596.5,282.5 597.0,279.4 595.6,276.8 596.0,274.1 597.7,271.8 598.6,269.4 600.5,267.7 602.0,267.0 604.8,263.7 607.6,260.6 611.4,258.3 614.0,255.4 616.6,252.6 618.8,249.5 620.6,246.4 622.3,242.8 623.7,240.4 624.4,238.0 624.9,234.9 622.5,235.1 619.5,236.1 615.9,236.6 612.4,237.5 609.1,238.3 606.2,235.8 604.8,235.4 606.0,233.2 603.8,232.0 602.0,230.5 600.3,228.6 597.7,225.9 596.3,223.4 594.9,219.9 593.0,218.7 591.8,215.9 591.3,212.1 590.8,209.6 587.8,206.0 587.5,204.2 586.1,200.6 584.2,196.9 583.0,194.7 580.9,191.8 580.4,188.5ZM771.9,316.4 772.8,320.2 771.9,323.1 773.3,327.6 774.7,333.4 775.7,336.9 777.3,342.5 777.3,346.7 775.7,347.5 775.9,349.5 779.2,351.5 782.8,351.8 786.3,349.8 789.9,348.4 793.4,348.4 797.0,345.8 798.9,344.4 802.2,343.8 807.6,342.2 813.5,341.6 816.6,343.0 820.2,343.6 821.6,346.4 824.4,350.9 825.4,349.5 827.7,347.2 829.6,344.7 829.2,348.1 829.2,351.8 830.8,351.2 831.3,353.6 833.7,355.9 834.4,358.3 836.5,360.4 839.1,361.3 843.4,362.8 846.2,361.3 847.8,362.2 849.7,363.7 852.6,361.0 855.0,359.8 858.3,358.9 859.0,354.4 860.6,350.1 861.8,347.2 864.4,343.6 865.6,340.0 867.0,334.0 865.8,328.1 865.6,324.7 863.2,322.8 860.9,319.7 859.7,317.4 856.8,314.6 855.0,312.1 850.7,308.8 849.0,305.1 847.6,300.1 845.5,297.4 843.4,295.2 842.9,291.6 840.8,288.5 839.3,291.6 838.6,295.2 838.4,298.9 837.9,302.8 836.7,305.1 834.1,304.8 831.3,303.3 828.4,301.1 826.1,299.9 824.2,298.4 825.1,295.7 826.8,292.1 825.4,291.4 821.8,291.6 818.3,290.4 816.6,289.7 814.7,291.6 811.9,292.8 810.7,295.0 810.0,298.4 807.4,298.7 805.0,296.5 802.9,296.2 800.3,297.9 798.1,300.9 795.8,303.1 794.1,304.6 792.7,306.8 790.8,309.6 786.3,311.6 783.2,312.3 780.4,312.8 778.3,313.9 775.0,315.9 773.5,316.1 771.9,316.4ZM435.3,163.8 439.6,163.2 444.1,165.9 442.4,166.5 437.2,164.4 435.3,163.8ZM460.7,194.5 462.8,193.4 467.1,193.4 471.8,190.7 470.8,192.6 466.6,194.5 463.3,193.9 460.7,194.5ZM443.6,221.9 446.7,222.9 448.6,226.6 447.2,227.3 444.8,224.6 443.6,221.9ZM922.9,304.6 926.2,305.1 925.7,306.8 923.1,306.6 922.9,304.6ZM125.3,209.1 126.5,209.1 126.3,209.9 125.3,209.1ZM131.2,211.6 134.3,212.1 134.5,213.2 132.6,212.9 131.2,211.6ZM620.2,291.4 621.8,295.2 623.0,299.9 621.4,302.6 620.6,305.8 619.0,311.3 617.1,317.2 615.0,323.9 611.2,325.4 608.1,324.1 606.9,320.2 606.0,315.9 607.2,312.1 608.6,308.8 607.6,304.6 608.8,301.9 612.8,300.9 614.7,298.9 616.9,296.0 619.0,292.8 620.2,291.4ZM462.6,180.7 464.0,180.7 463.7,181.3 462.6,180.7ZM634.1,313.6 635.6,313.9 634.9,314.6 634.1,313.6ZM891.6,311.8 895.2,313.9 898.7,317.2 896.4,315.9 891.6,311.8ZM912.2,349.8 914.1,352.1 916.5,355.0 918.8,355.9 919.8,358.9 922.4,360.1 926.0,359.5 924.5,363.7 922.4,364.9 921.5,368.0 918.4,371.5 916.7,370.5 917.7,367.4 914.8,364.3 916.7,361.9 916.7,358.9 915.1,355.3 912.2,349.8ZM912.2,368.0 915.1,369.2 916.0,371.8 913.6,375.6 912.2,378.2 908.9,380.5 907.7,385.6 905.4,387.9 901.8,387.9 897.5,385.9 898.3,383.2 901.8,379.2 907.0,375.9 908.9,372.7 910.6,368.9 912.2,368.0ZM629.6,232.9 632.5,232.7 632.0,233.7 630.1,233.7 629.6,232.9ZM846.0,368.6 850.2,369.9 854.5,369.2 854.5,373.4 853.3,375.9 851.4,377.9 849.0,377.6 847.1,373.7 846.0,370.2 846.0,368.6ZM897.5,298.4 899.9,300.1 902.3,305.1 898.7,302.6 897.5,298.4ZM1058.5,-7.4 1064.4,19.1 1071.5,20.6 1078.6,9.2 1083.3,-0.5 1076.2,-7.4 1058.5,-7.4ZM1040.7,110.2 1043.8,114.5 1045.5,118.0 1041.9,114.5 1040.7,110.2ZM986.1,215.2 988.7,215.7 987.2,217.4 986.1,215.2ZM980.9,210.6 982.5,211.4 981.8,211.6 980.9,210.6ZM989.1,94.5 995.3,92.7 992.2,98.0 989.1,94.5ZM957.7,55.3 962.2,51.8 966.2,49.5 968.1,46.5 966.7,42.8 961.9,39.0 966.2,35.1 969.3,30.4 972.3,25.6 979.2,22.0 984.4,18.4 990.6,22.0 995.3,21.3 1001.7,24.2 1010.0,26.3 1017.1,27.0 1021.8,30.1 1027.7,33.1 1032.5,35.1 1037.2,30.4 1043.1,29.7 1049.0,27.7 1053.8,25.6 1058.5,31.8 1063.2,31.8 1069.1,30.4 1076.2,33.8 1083.3,35.8 1090.4,37.7 1099.9,39.0 1104.6,35.1 1111.7,40.3 1118.8,42.2 1123.6,38.3 1128.3,39.0 1127.1,27.7 1128.3,14.6 1134.2,13.9 1137.8,24.2 1140.1,31.1 1143.7,35.1 1147.2,39.6 1150.8,44.6 1154.3,37.7 1153.2,29.7 1160.2,29.1 1163.1,34.4 1163.3,44.0 1157.9,51.3 1152.0,50.1 1150.8,55.9 1147.2,63.1 1141.3,66.4 1136.6,72.1 1133.0,79.6 1131.4,86.8 1133.0,90.5 1136.6,96.3 1141.3,97.1 1147.2,100.2 1154.3,105.2 1160.7,105.7 1161.0,112.6 1163.8,116.5 1167.3,120.7 1168.8,116.5 1168.3,109.8 1173.7,101.0 1173.7,94.5 1172.1,86.8 1171.4,80.6 1170.9,73.1 1176.8,73.1 1182.7,73.6 1186.3,78.6 1191.0,80.6 1191.0,87.7 1194.6,91.4 1198.1,90.0 1201.7,83.0 1204.0,88.2 1207.6,95.8 1210.0,101.5 1213.5,105.7 1218.2,108.5 1221.8,112.6 1223.7,117.7 1220.6,120.7 1213.5,124.8 1205.2,124.8 1198.1,125.6 1193.4,128.9 1188.7,135.3 1187.0,137.4 1191.0,133.9 1195.8,128.9 1203.3,130.0 1201.7,133.9 1202.1,137.4 1206.4,140.8 1211.1,141.5 1213.5,139.8 1212.3,136.7 1210.0,139.8 1205.2,144.8 1199.8,148.1 1199.1,145.2 1202.8,142.5 1196.9,143.2 1193.4,145.8 1189.4,148.1 1188.2,151.4 1189.8,153.9 1186.3,155.5 1181.5,156.8 1180.4,158.0 1179.9,161.1 1178.0,163.2 1176.8,165.6 1175.2,168.3 1176.6,173.6 1173.7,175.6 1169.7,177.9 1166.6,181.0 1163.8,183.8 1163.1,188.0 1165.0,193.4 1166.2,197.9 1165.2,201.3 1163.6,201.6 1161.9,199.0 1159.8,195.0 1159.5,191.2 1156.7,188.5 1153.6,189.3 1150.8,187.4 1146.0,187.4 1143.4,188.0 1144.4,190.7 1141.3,191.0 1137.8,189.6 1133.5,189.3 1130.7,190.7 1126.4,193.4 1125.0,195.8 1125.5,199.2 1124.3,203.2 1124.0,209.1 1125.5,213.4 1128.5,217.7 1131.8,219.2 1136.6,218.2 1139.7,217.9 1141.6,214.9 1141.8,212.1 1147.2,210.9 1149.8,211.4 1148.4,215.9 1147.7,218.9 1146.5,222.2 1145.1,224.9 1148.4,225.1 1153.2,224.6 1156.7,225.6 1158.6,227.3 1157.6,232.0 1157.4,236.3 1158.1,238.5 1161.4,241.1 1165.0,241.1 1167.3,240.2 1170.2,240.9 1172.6,242.8 1172.3,244.2 1170.2,243.5 1170.0,245.0 1167.3,242.1 1165.5,243.3 1165.2,245.7 1162.4,244.0 1159.5,243.3 1157.4,241.6 1155.0,239.7 1152.7,239.5 1152.4,236.8 1150.1,233.7 1147.7,231.5 1143.7,231.0 1139.0,229.8 1136.1,227.3 1133.0,224.4 1129.5,225.1 1125.9,224.9 1122.4,223.6 1117.7,221.9 1114.1,219.9 1110.5,218.9 1107.0,216.2 1105.6,213.2 1106.5,210.4 1105.1,207.8 1102.5,204.7 1099.2,201.3 1096.6,198.2 1093.7,194.5 1090.0,191.8 1087.8,187.1 1083.8,183.8 1085.5,188.5 1087.6,191.5 1089.7,196.6 1092.8,200.6 1094.2,203.9 1096.3,206.5 1094.7,206.0 1090.9,203.2 1090.0,199.5 1087.1,197.1 1084.8,194.2 1085.2,192.3 1082.9,188.8 1081.0,186.0 1079.1,183.3 1078.1,181.3 1076.5,178.5 1075.0,177.3 1070.1,175.9 1069.1,172.7 1066.8,168.9 1065.6,166.2 1064.4,164.4 1062.5,160.8 1061.3,158.6 1061.8,154.9 1060.8,150.7 1061.8,145.2 1062.3,139.4 1061.8,135.6 1060.4,131.7 1063.9,132.5 1065.6,134.9 1064.9,129.6 1062.0,127.1 1058.7,124.1 1054.9,122.2 1053.0,117.3 1049.0,112.6 1047.1,107.3 1044.3,104.4 1040.7,98.9 1037.2,92.3 1032.5,92.3 1029.4,90.0 1024.6,86.3 1020.6,84.4 1014.9,84.4 1010.0,81.1 1005.2,83.5 1001.7,85.8 996.2,88.2 997.0,81.1 993.4,86.8 991.0,91.4 986.3,95.8 982.3,99.7 978.0,103.2 973.3,105.2 968.5,107.3 965.5,108.5 968.5,105.7 973.0,102.3 976.8,98.9 981.6,93.6 983.5,90.5 979.2,90.9 972.6,90.0 971.6,85.4 967.4,83.5 964.5,80.6 964.3,76.7 966.7,69.5 972.1,66.9 974.5,62.6 970.7,61.5 966.2,61.5 961.7,60.9 957.7,55.3ZM960.7,83.5 963.8,83.5 963.1,84.9 960.7,83.5ZM948.9,66.9 955.5,68.5 956.2,69.5 949.6,68.0 948.9,66.9ZM1051.6,123.0 1059.7,126.0 1063.7,132.1 1060.1,131.0 1053.8,125.6 1051.6,123.0ZM1076.2,1.1 1084.5,2.0 1090.4,8.5 1095.2,6.1 1103.5,3.6 1108.2,6.1 1115.3,16.9 1116.5,27.7 1111.7,35.8 1103.5,34.4 1095.2,35.1 1086.9,35.1 1078.6,28.4 1074.8,22.0 1083.3,19.1 1075.0,11.6 1076.2,1.1ZM977.3,209.1 978.5,209.1 978.3,209.9 977.3,209.1ZM983.2,211.6 986.3,212.1 986.5,213.2 984.6,212.9 983.2,211.6Z"/><path fill="#c0d3de" d="M749.6,120.0 755.5,116.1 762.6,104.0 762.2,108.5 756.7,117.7 749.6,120.0ZM678.6,139.1 685.7,138.4 690.5,137.4 690.0,139.4 683.4,141.1 678.6,139.1ZM569.1,151.7 569.8,154.2 572.4,155.8 577.6,156.1 582.3,153.6 586.6,153.3 590.8,155.5 594.1,156.8 598.2,156.4 601.7,154.9 602.0,151.7 598.2,148.8 593.9,145.5 592.0,144.5 593.9,139.8 596.0,136.3 592.2,136.7 586.3,141.5 589.9,142.5 587.3,143.5 582.8,145.2 580.4,142.5 583.0,140.4 578.3,138.1 574.5,140.1 573.6,142.5 571.4,145.8 569.8,149.1 569.1,151.7ZM614.7,148.1 615.9,150.1 618.3,153.9 620.9,158.0 622.5,158.6 619.9,162.0 619.5,165.6 621.8,167.7 625.4,169.2 630.8,168.9 631.3,165.6 629.2,161.7 628.7,158.0 628.5,153.9 627.8,151.0 624.9,149.4 624.2,145.2 622.5,144.8 624.9,142.5 628.9,142.5 629.2,137.4 624.7,136.3 619.9,138.7 618.3,140.8 615.9,141.8 614.7,144.8 614.7,148.1ZM207.7,58.7 212.4,50.1 220.7,47.1 224.2,51.8 217.1,55.9 212.4,58.7 207.7,58.7ZM225.4,79.6 233.7,72.1 240.8,70.6 239.6,73.6 232.5,77.2 229.0,80.1 225.4,79.6ZM574.5,84.4 573.3,78.6 576.9,76.2 581.1,78.6 580.4,83.0 576.9,84.4 574.5,84.4ZM306.1,154.2 310.6,154.9 316.5,151.7 316.5,150.4 313.0,151.4 308.2,153.3 306.1,154.2ZM308.5,150.1 310.4,145.2 311.1,142.5 313.7,142.8 313.0,140.4 305.9,139.4 303.5,140.4 306.1,143.5 306.4,146.8 308.5,150.1ZM584.0,285.8 585.1,291.6 586.8,297.4 585.9,290.4 584.0,285.8ZM295.7,154.5 297.1,154.5 299.3,148.4 299.5,143.5 302.3,140.8 302.6,140.1 298.5,140.4 295.2,144.8 295.7,150.1 295.7,154.5ZM314.6,149.1 320.1,149.4 323.2,148.4 322.9,146.1 320.1,147.1 315.8,147.8 314.6,149.1ZM285.5,137.7 291.7,133.5 294.8,130.0 299.5,131.0 302.8,136.7 298.8,138.4 294.1,136.0 289.3,138.1 285.5,137.7ZM572.4,271.1 575.0,276.0 576.4,282.7 577.3,282.0 574.5,273.7 573.1,270.8 572.4,271.1ZM578.8,266.6 579.2,262.3 582.8,262.3 584.7,264.2 582.8,268.9 579.2,268.4 578.8,266.6ZM273.5,124.5 275.6,121.1 272.0,111.4 270.4,112.6 273.9,122.2 273.5,124.5ZM584.7,79.6 585.9,70.6 588.7,72.1 589.4,78.1 586.3,79.6 584.7,79.6ZM1059.7,58.7 1064.4,50.1 1072.7,47.1 1076.2,51.8 1069.1,55.9 1064.4,58.7 1059.7,58.7ZM1077.4,79.6 1085.7,72.1 1092.8,70.6 1091.6,73.6 1084.5,77.2 1081.0,80.1 1077.4,79.6Z"/><path fill="none" stroke="#b9bdb3" stroke-width="0.75" stroke-linejoin="round" d="M211.7,129.6 278.2,129.6 278.4,128.1 279.6,130.7 286.9,132.8 291.7,133.2 294.3,132.1 302.8,137.0 304.0,138.4 305.6,139.8 308.5,142.5 308.2,150.1 306.8,153.3 311.1,151.4 316.3,150.4 315.8,148.4 321.5,148.1 324.1,145.2 326.7,143.5 334.3,143.5 336.2,142.1 337.6,137.7 339.7,135.3 342.1,135.6 343.0,141.1 344.7,143.2M169.8,30.1 169.8,83.0 174.3,83.0 178.1,89.1 182.8,85.4 187.8,91.8 191.6,99.7 195.8,102.7 195.8,107.3M226.4,181.6 232.0,181.0 231.8,181.6 240.8,184.9 247.4,184.9 247.4,183.5 251.4,183.5 256.2,189.6 259.5,191.2 261.2,189.1 263.5,189.1 268.0,195.3 273.5,199.5M285.3,228.3 285.3,226.4 286.5,224.4 289.6,224.4 289.6,221.4 287.2,221.4 292.6,220.2 294.5,218.4M292.6,220.2 292.4,224.9M292.4,224.9 291.9,228.6 295.7,231.0M291.9,228.6 290.3,230.3M296.9,232.2 300.7,230.0 303.0,227.8 306.6,227.1M300.7,236.6 305.4,237.0M307.3,244.0 308.0,240.4M320.6,242.8 319.1,245.9M333.3,235.4 332.2,236.6 331.9,241.6 333.1,245.9 337.6,246.4 339.3,248.5 343.8,248.3 343.0,252.3 344.2,255.2 343.0,258.3 344.7,260.2M344.7,260.2 339.0,260.6 338.1,265.4 338.1,272.9M316.5,259.7 321.3,262.1 325.3,263.5 325.5,266.6 318.4,271.1 313.5,271.1M325.3,263.5 329.5,265.8 331.9,268.9 337.1,268.9 338.1,272.9M338.1,272.9 330.7,275.3 330.3,279.6 328.4,280.8 330.7,285.1 332.2,286.8 336.4,289.2 338.8,289.0M338.8,289.0 340.9,293.1 340.2,296.5 339.3,299.6 340.2,301.9 338.8,304.8 336.9,307.3M338.8,304.8 340.7,307.6 341.4,310.1 342.1,314.6 344.7,318.4M338.8,289.0 341.1,289.7 346.6,286.3 349.0,289.0 350.9,292.8 354.9,294.0 358.7,295.2 360.6,299.2 361.0,302.1 365.3,302.1 365.8,310.8 366.7,316.4 371.9,318.2 372.6,321.5 375.0,321.8 374.3,325.7 376.2,329.7 371.4,332.3 367.2,338.0 371.0,340.0 377.1,347.8M344.7,318.4 346.8,315.9 351.1,318.4 355.3,316.9 357.5,310.3 363.6,309.6 365.8,310.8M355.3,316.9 359.1,321.0 364.3,323.6 367.2,325.4 374.3,325.7M367.2,338.0 365.8,344.1 365.3,348.4M344.7,318.4 341.6,322.8 341.1,328.1 340.0,330.7 338.5,334.8 337.8,338.9 338.3,345.8 336.9,351.5 335.9,355.9 335.2,364.9 333.8,371.1 333.8,377.6 334.3,384.2 332.4,391.1 331.2,398.2 330.0,401.9 332.4,405.7 333.3,407.6 339.0,408.3 341.1,409.9M359.8,242.8 361.5,246.6 358.2,249.0 359.8,250.7 361.5,251.2 354.9,253.5 350.1,253.1 352.0,257.6 346.6,261.3 344.7,260.2M361.5,251.2 362.4,253.5 362.0,259.9 367.4,258.5 369.8,258.5M368.4,249.2 366.2,254.7 369.8,258.5 374.5,257.6 375.7,254.5 375.2,250.2M374.5,257.6 379.2,257.6 381.4,253.1M365.8,310.8 367.4,306.8 365.3,302.1M499.2,148.8 503.5,151.0 507.5,151.7 511.1,152.0M482.4,153.3 484.1,153.0 488.1,153.6 488.8,154.5 486.9,158.9 486.2,161.1 486.9,162.6 485.8,166.8 486.0,168.0M509.4,121.9 510.4,123.4 513.4,126.3 515.1,126.7 517.2,127.8 518.6,127.8 522.9,129.6 521.5,134.6 520.1,134.9 517.9,139.1 520.1,140.4 520.3,142.8 519.1,145.8 521.2,147.5M513.4,120.7 515.3,120.3 517.5,122.2 517.9,125.6 518.6,127.8M520.5,113.4 520.1,117.7 517.9,118.8 517.7,121.9 517.9,123.0 518.6,124.8 517.9,125.6M524.1,106.9 526.9,107.3M537.1,111.0 538.1,116.1 538.3,120.3 539.0,122.2M539.0,122.2 537.3,122.2 532.1,124.8 533.3,127.8 536.2,130.3 534.3,134.9 532.4,134.2 528.4,134.9 526.0,134.6 523.9,134.2 521.5,134.6M539.0,122.2 542.5,124.8 546.1,126.0 548.0,127.8 550.8,128.9 557.0,129.2M532.1,124.8 539.0,129.6 543.5,131.0 544.2,133.2 542.5,138.4M548.0,127.8 544.2,133.2M528.4,134.9 528.4,137.0 532.6,136.7 535.9,138.4 538.1,138.7 542.5,138.4M526.0,134.6 524.8,140.4 528.4,137.0M535.9,141.5 535.7,138.4M544.2,133.2 548.0,133.9 550.8,132.5 555.8,131.7 557.7,133.5 553.2,139.4 551.5,139.4 548.5,140.4 545.9,140.8 542.5,138.4M557.0,129.2 555.8,131.7M557.0,129.2 560.1,124.5 560.5,122.2 559.1,118.0 559.4,111.0 557.5,108.9 553.9,105.7M559.4,111.0 563.9,109.3 566.5,103.6 570.2,101.5M553.2,101.9 557.5,101.0 562.7,101.5 566.5,103.6M554.6,95.8 561.0,94.1 564.3,94.1 568.3,95.8M568.3,95.8 569.1,93.2 570.0,87.2M570.2,101.5 568.3,95.8M570.2,101.5 576.6,104.0 576.4,107.3 579.2,111.4 578.8,118.0M559.1,118.0 563.9,118.8 569.8,120.0 575.9,121.1 578.8,118.0M578.8,118.0 582.8,116.9 586.3,121.5 593.9,126.0 598.2,127.4 597.7,133.9 593.9,136.3M557.7,133.5 562.4,134.2 566.5,132.1 568.6,131.4 572.4,133.9 574.3,137.7 570.2,141.8 574.5,142.5M566.5,132.1 570.2,138.4 570.2,141.8M553.2,139.4 557.2,144.8 561.2,147.8 567.4,146.5 571.2,147.8M548.5,140.4 549.4,142.8 548.7,145.5 549.9,149.4 551.5,150.4 554.6,152.3 556.5,152.3 557.9,149.7 556.5,146.8 557.2,144.8M542.5,138.4 545.9,140.8 541.1,142.8 540.7,145.8 542.8,148.8M545.9,143.2 549.4,142.8M540.7,145.8 545.2,150.4 547.3,151.7M549.4,153.9 551.1,151.7 552.3,153.6 553.2,157.7 551.1,160.5M552.3,153.6 556.5,152.3M553.0,156.8 557.7,155.5 560.3,154.9 565.3,154.2 566.0,155.8 565.0,157.1M565.3,154.2 569.8,153.3M532.6,89.1 530.5,89.1 532.6,79.6 532.4,69.5 537.8,57.0 540.4,48.3 545.9,37.7 552.0,33.8M560.8,54.2 559.8,48.3 559.4,41.5 552.0,33.8M552.0,33.8 555.6,37.7 562.7,37.1 566.2,28.4 571.0,33.8 573.3,28.4 577.1,30.4M571.0,33.8 571.4,39.6 574.5,43.4 572.4,52.4 574.5,58.7 578.0,69.5 574.3,78.6 569.3,82.0M598.2,148.8 602.9,149.4 607.6,151.0 611.7,151.7 614.0,153.6 616.6,155.8 618.5,153.9M601.7,154.9 606.5,156.1 610.0,155.5 613.8,156.1 613.5,161.1 610.0,160.5 609.5,160.5 607.6,159.5 606.5,156.1M609.5,160.5 608.3,167.1 609.5,168.0 603.8,168.0 598.2,169.2 593.4,169.2 590.4,169.2 589.2,171.6 588.5,171.9M613.5,162.9 617.1,162.9 619.2,164.4M609.5,160.5 613.5,162.9M603.8,168.0 601.2,170.1 600.5,176.2 595.3,179.1 590.6,182.2 587.8,181.0M588.5,175.3 590.1,176.8 588.2,179.3 586.6,179.9M588.2,179.3 587.8,181.0 587.5,184.4 586.3,189.9M584.4,184.9 586.1,189.9M595.3,179.1 596.3,182.4 591.1,184.4 593.4,188.5 590.4,188.8 588.9,190.1 586.1,190.1M596.3,182.4 604.8,185.5 609.3,190.7 613.5,191.0 616.4,192.6 618.0,192.3M613.5,191.0 616.9,188.5 617.1,187.1M609.5,168.0 610.9,171.9 612.6,172.4 610.9,177.3 612.6,180.2 615.7,181.6 616.6,183.8 616.4,186.0 618.5,188.8M604.6,223.2 606.0,220.9 607.9,221.2 613.1,221.7 614.7,222.4 617.1,219.7 619.7,218.2 626.6,217.2 633.7,214.7 635.3,209.6 634.1,207.8 628.0,207.3 625.6,203.9M626.6,217.2 629.2,222.9M634.1,207.8 635.8,204.5 637.0,202.1M618.5,188.8 617.1,187.1M618.5,153.9 615.0,148.1M619.9,138.7 618.5,138.1 618.8,136.3 615.0,133.9 613.5,131.4 614.7,128.9 617.1,124.5 621.8,121.1 627.8,120.3 632.7,123.0 637.7,122.6 643.1,123.0 648.3,122.2 648.8,116.5 646.4,111.8 648.6,110.6 653.3,109.8 658.8,108.1 666.8,105.2 672.0,110.2 677.5,110.6 677.2,112.6 683.8,110.6 687.2,114.5 693.3,122.6 698.8,122.2 703.5,124.8 706.1,128.5 710.1,129.2M628.5,153.9 635.8,155.5 636.0,143.5 642.0,141.5 643.1,145.8 647.9,145.5 650.2,148.4 657.1,147.8 659.9,150.4 660.9,153.6 665.9,157.4 667.3,155.5 671.5,152.6 677.5,151.7 679.1,149.1 683.4,150.1 690.9,150.7 693.3,150.4 693.5,143.8 698.8,141.8 700.4,135.6 705.1,136.7 706.6,131.7 710.1,129.2M635.8,155.5 638.6,155.5 642.2,150.7 645.7,153.3 648.6,156.1 651.2,159.9 655.4,162.9 658.8,165.0 660.9,167.4M631.1,167.7 634.6,165.9 639.3,165.6 643.6,167.4 646.4,169.8 648.3,172.7M648.3,172.7 650.9,174.2 656.1,170.7 658.8,167.7 660.9,167.4 664.0,168.0 667.3,168.0 669.2,166.8 672.7,165.9 672.2,168.6 675.3,168.6 680.8,167.7M665.9,157.4 670.8,157.1 671.5,158.9 676.5,156.8 673.4,155.2 671.5,152.6M669.2,166.8 668.0,161.4 671.5,158.9M676.5,156.8 677.7,161.4 672.7,161.1 668.0,161.4M649.3,201.3 649.5,197.7 653.3,196.1 652.1,193.1 648.8,190.4 647.6,189.1 649.5,184.7 647.6,184.4 646.7,178.2 647.6,176.2 648.3,172.7M652.1,193.1 656.1,189.6 660.4,188.8 661.8,184.9 666.1,184.1 667.5,183.3 669.2,178.2 671.8,177.3 673.0,173.9 672.5,171.6 675.3,168.6M664.9,205.2 666.3,203.7 671.5,203.4 671.1,200.0 668.0,197.4 669.6,194.2 673.7,194.2 677.5,188.8 679.6,185.8 680.1,183.3 681.7,182.2 679.6,179.9 678.6,177.3 682.9,175.9 687.6,173.0M680.8,167.7 681.5,168.3 687.6,173.0 690.2,176.5 690.0,180.2 691.6,181.6 689.8,184.4 692.4,186.0 695.4,188.0M695.4,188.0 693.1,191.8 697.6,194.2 700.6,195.8 705.1,197.4 709.2,197.9 712.0,198.2 712.2,194.5M695.4,188.0 701.1,190.7 707.0,194.2 712.2,194.5M712.2,194.5 715.3,193.4 721.2,194.2 720.5,197.1 716.0,197.4 713.7,196.3M712.0,198.2 714.1,201.1 713.0,203.2 713.4,206.5 714.1,209.3M716.0,197.4 722.2,201.6 720.8,204.2 721.9,206.3 722.7,211.4M721.2,194.2 727.1,191.5 730.9,190.1 733.8,193.4 731.6,195.8 728.3,197.9 727.4,201.6 724.3,204.5 723.8,207.8 722.7,211.4M733.8,193.4 735.9,196.6 737.1,199.5 734.7,202.4 735.2,204.7 739.0,209.3 743.0,211.1 744.4,208.6M744.4,208.6 745.8,208.3 748.5,207.8 752.7,206.3 756.0,207.6 759.1,210.6M739.0,209.3 741.4,213.7 743.2,220.2 745.1,219.2 751.3,222.2 753.4,227.1 754.1,229.3 758.2,228.8 757.9,233.7 755.3,235.4 752.2,237.0 751.1,238.0M744.4,208.6 743.0,211.1 745.4,214.7 749.4,213.9 751.1,217.4 753.4,219.2 756.0,223.2 758.2,228.8M736.9,244.0 735.2,227.1 737.6,224.1 735.0,218.2 734.0,218.2 735.9,215.4 739.0,213.7 741.4,213.7M740.4,247.6 742.8,249.5 745.1,248.3M746.3,234.4 747.3,228.8 751.5,228.6 754.1,229.3M710.1,129.2 711.3,128.9 717.7,134.9 718.6,142.5 729.0,146.1 731.6,151.0 740.2,151.4 744.4,151.7 752.0,154.5 757.2,153.0 764.8,150.7 768.1,147.8 767.9,143.8 772.4,144.5 778.0,137.7 783.0,137.7 786.8,137.7 787.3,136.7 781.3,134.2 778.7,133.9 779.7,126.7M710.1,129.2 713.7,127.8 718.2,124.8 721.7,123.0 727.9,126.0 733.8,127.1 735.9,124.5 735.4,118.4 742.3,120.3 745.6,124.1 754.1,124.5 760.3,128.5 765.5,129.2 770.9,127.4 774.2,125.2 776.9,126.7 779.7,126.7 782.5,127.8 785.8,125.6 787.5,120.0 789.4,116.5 792.7,113.0 799.3,113.8 804.5,121.5 806.4,127.4 812.6,130.0 815.9,134.9 821.1,132.1 822.1,133.9 820.4,140.8 818.3,143.8 814.2,143.8 813.5,150.4 812.6,152.0M797.7,159.9 801.5,156.4 804.1,154.9 806.9,154.9 808.8,152.3 812.6,152.0M801.9,166.5 804.8,164.7 807.4,163.8M693.3,150.4 689.5,155.5 685.3,157.1 682.4,157.7 678.6,159.5 677.7,161.4M677.7,161.4 681.5,168.3M691.6,181.6 693.5,181.6M498.3,174.2 499.2,175.9 499.5,178.8 500.4,182.4 496.9,183.0 495.0,184.1 494.7,186.0 490.2,189.6 482.9,192.0 482.9,195.8M472.3,194.7 482.9,194.7M482.9,195.8 482.9,199.5 475.1,199.2 475.1,205.8 472.7,207.3 472.7,211.4 463.3,211.4M523.9,168.9 523.1,173.0 522.9,175.6 521.5,179.3 525.0,182.7 526.0,188.0M530.7,179.6 527.9,183.5 527.2,186.3 526.0,188.0M526.0,188.0 526.9,200.8 527.2,202.1 531.0,203.7 531.9,205.8M562.9,184.1 562.2,188.5 562.7,209.6M562.7,209.6 590.8,209.6M562.7,209.6 562.7,214.7 560.3,214.7 560.3,215.9M531.9,205.8 536.6,208.1 539.0,207.0 560.3,215.9M482.9,195.8 492.1,201.9 506.3,212.1 511.1,216.9 513.7,216.7 517.2,215.9 521.2,212.4 531.9,205.8M492.1,201.9 489.3,212.1 490.5,223.4 480.5,226.4 476.3,226.1 474.6,228.1 474.6,232.7M463.3,211.4 464.0,212.7M464.5,224.1 469.2,223.2 474.6,228.1M464.0,232.9 468.0,233.2 471.1,233.2 476.3,233.4 474.6,232.7M463.7,231.5 466.6,230.5 470.8,230.8 464.5,230.5M513.7,216.7 513.4,222.7 512.0,225.9 505.9,227.1 502.6,227.1 498.8,228.1 495.9,230.3 493.3,232.2 490.7,236.8 490.5,238.3M476.3,233.4 479.4,234.9 483.1,236.8 484.6,238.7 484.8,243.0 483.9,244.7 485.5,249.0 485.8,252.7M472.3,241.6 477.0,239.2 479.4,241.6 478.4,243.5 476.3,246.6M479.4,241.6 483.4,245.0 483.9,244.7M467.8,236.3 471.1,233.2M490.5,238.3 492.1,239.7 496.9,240.2 497.1,236.8 503.5,236.8 508.7,232.9 512.0,235.1M490.5,238.3 484.6,238.7M496.6,251.2 497.1,240.2M506.3,248.5 504.7,245.4 504.9,237.0M509.9,247.8 510.1,241.4 512.0,235.1M507.3,248.3 507.3,241.6 505.6,236.8M512.0,235.1 513.7,230.8 520.1,232.0 524.8,232.5 533.3,231.2 536.6,232.5 537.8,232.0M537.8,232.0 537.1,235.6 535.0,241.6 532.4,243.3 531.2,246.9 526.7,246.9 523.9,251.6M539.0,207.0 541.1,213.7 539.7,219.9 536.4,225.6 535.7,228.6 537.8,232.0M537.1,235.6 540.2,239.2 537.1,240.2 539.9,244.7 547.5,244.0 548.7,241.6 553.2,240.4 557.0,236.8 556.3,232.7 555.3,231.7 557.7,225.4 560.3,225.4 560.3,215.9M526.7,257.6 530.2,257.6 535.0,257.8 538.1,257.8 541.6,259.0 542.5,254.9 547.3,252.6 551.5,252.1 556.5,253.3 561.2,250.9 563.4,250.4 568.3,250.7 570.7,252.8 576.4,254.7M539.9,244.7 538.1,249.0 538.1,253.1 541.6,259.0M530.2,257.6 530.2,260.6 525.5,260.6M535.0,257.8 534.3,259.4 537.1,264.2 537.8,267.7 534.3,268.7 531.9,271.1 530.0,272.2M542.5,254.9 544.9,259.9 545.6,265.8 542.3,271.1 539.5,273.2 536.6,273.7 533.1,274.8 532.4,277.0M532.4,277.2 534.3,277.0 542.1,277.0 543.5,280.1 545.2,282.2 548.9,281.5 549.4,280.1 551.1,279.4 555.1,280.3 555.6,284.6 556.3,289.2 560.1,289.2 560.3,293.5 555.6,294.0 555.6,301.9 558.4,305.1M560.3,289.2 563.6,289.9 566.5,291.4 568.6,291.1 571.2,293.8 573.6,294.5 573.6,292.1 571.0,284.9 576.4,282.7M576.4,282.7 575.0,279.8 573.1,277.0 572.6,273.4 573.8,273.7 575.7,268.7 573.6,266.3 574.3,263.5 573.6,260.6 577.3,257.6 576.4,254.7M576.4,254.7 581.6,254.0 584.0,253.1 586.3,252.1 588.2,250.4M577.3,257.6 583.7,259.7 584.0,263.0 583.7,265.4M575.7,265.6 583.7,265.4 592.7,270.3 596.3,274.1M588.2,250.4 593.7,254.5 597.2,254.9 600.5,253.5 602.7,253.8 600.5,256.4 600.5,265.1 602.0,267.0M602.7,253.8 605.3,251.4 610.0,251.2 616.6,244.0 607.6,241.6 605.3,237.0 606.0,236.8M588.2,250.4 587.0,250.0 585.6,247.3 582.3,244.2 581.4,244.5 584.2,242.6 584.7,237.8 586.3,235.8 588.2,232.9 589.9,228.8 591.8,229.0 593.2,227.3 598.2,228.3 602.0,230.8 603.8,233.2 602.2,235.8M589.9,228.8 589.6,225.1 591.5,222.2 594.4,219.9M557.7,237.0 561.7,242.6 563.6,238.7 567.4,240.2 572.1,240.2 574.5,238.5 577.6,239.7 580.2,236.6 579.5,234.4 582.1,233.9 584.0,240.4 584.2,242.6M563.4,250.4 561.7,242.6M531.4,304.6 535.5,303.8 547.3,304.8 553.0,306.3 558.4,305.1 563.4,305.8M553.0,306.3 553.2,316.4 550.8,316.4 550.8,323.6 550.6,333.4 542.5,333.7M550.8,323.6 552.5,326.5 557.5,324.7 560.8,326.0 564.3,325.4 566.2,323.1 567.6,320.5 569.8,318.4 573.1,316.7M563.4,305.8 566.7,306.6 569.8,315.1 573.1,316.7M563.4,305.8 568.8,303.8 571.7,301.4 575.4,300.4 576.9,301.4 581.1,303.1 580.9,307.6 580.7,312.8 579.2,315.1 577.6,317.4 573.1,316.7M577.6,317.4 579.0,322.6 579.0,326.2 581.4,327.3M575.4,300.4 575.0,298.2 582.1,296.5 581.6,285.6 576.4,282.7M581.6,285.6 585.4,290.4 584.7,293.8 587.0,297.4 588.5,302.1 587.0,304.1 584.0,301.4 582.1,296.5M585.4,290.4 592.2,290.6 594.6,289.9 599.1,288.0M581.6,285.6 581.1,284.9 577.3,283.4 576.4,282.7M567.6,336.9 572.8,334.8 573.1,337.5 570.0,339.4 567.6,336.9M837.2,269.2 837.2,279.4 837.0,284.6M762.9,258.5 766.2,260.2 769.8,259.4 774.5,259.4 777.1,254.7 778.5,252.8 782.1,253.1M799.1,284.4 799.6,285.6M740.4,247.6 745.1,248.3M226.6,129.6 211.7,129.6M1063.7,129.6 1130.2,129.6 1130.4,128.1 1131.6,130.7 1139.0,132.8 1143.7,133.2 1146.3,132.1 1154.8,137.0 1156.0,138.4 1157.6,139.8 1160.5,142.5 1160.2,150.1 1158.8,153.3 1163.1,151.4 1168.3,150.4 1167.8,148.4 1173.5,148.1 1176.1,145.2 1178.7,143.5 1186.3,143.5 1188.2,142.1 1189.6,137.7 1191.7,135.3 1194.1,135.6 1195.0,141.1 1196.7,143.2M1021.8,30.1 1021.8,83.0 1026.3,83.0 1030.1,89.1 1034.8,85.4 1039.8,91.8 1043.6,99.7 1047.8,102.7 1047.8,107.3M1078.4,181.6 1084.0,181.0 1083.8,181.6 1092.8,184.9 1099.4,184.9 1099.4,183.5 1103.5,183.5 1108.2,189.6 1111.5,191.2 1113.2,189.1 1115.5,189.1 1120.0,195.3 1125.5,199.5M1078.6,129.6 1063.7,129.6"/><path fill="none" stroke="#f2f1ec" stroke-width="1.1" stroke-dasharray="2.5 1.8" d="M113.5,108.5 109.4,111.0 104.7,113.8 100.0,115.7 95.2,117.3 90.5,118.4 85.8,119.2 81.1,119.6 76.3,119.2 72.8,118.8 68.0,118.0 63.3,116.5 59.8,114.9M965.5,108.5 961.5,111.0 956.7,113.8 952.0,115.7 947.2,117.3 942.5,118.4 937.8,119.2 933.0,119.6 928.3,119.2 924.8,118.8 920.0,118.0 915.3,116.5 911.8,114.9"/><rect x="289.8" y="0" width="2" height="416" fill="rgb(215,215,218)" fill-opacity="0.55"/></svg><div class="cl" style="left:502.0px;top:105.6px;width:32px;height:32px;background:rgba(234,214,109,.6)"></div><div class="cl" style="left:505.5px;top:109.1px;width:25px;height:25px;background:rgba(229,193,68,.6)"></div><div class="ct" style="left:502.0px;top:116.6px">45</div><div class="cl" style="left:210.3px;top:148.5px;width:32px;height:32px;background:rgba(234,214,109,.6)"></div><div class="cl" style="left:213.8px;top:152.0px;width:25px;height:25px;background:rgba(229,193,68,.6)"></div><div class="ct" style="left:210.3px;top:159.5px">14</div><div class="cl" style="left:289.3px;top:154.5px;width:32px;height:32px;background:rgba(234,214,109,.6)"></div><div class="cl" style="left:292.8px;top:158.0px;width:25px;height:25px;background:rgba(229,193,68,.6)"></div><div class="ct" style="left:289.3px;top:165.5px">19</div><div class="cl" style="left:567.3px;top:165.3px;width:32px;height:32px;background:rgba(234,214,109,.6)"></div><div class="cl" style="left:570.8px;top:168.8px;width:25px;height:25px;background:rgba(229,193,68,.6)"></div><div class="ct" style="left:567.3px;top:176.3px">18</div><div class="cl" style="left:673.0px;top:209.5px;width:32px;height:32px;background:rgba(184,223,150,.6)"></div><div class="cl" style="left:676.5px;top:213.0px;width:25px;height:25px;background:rgba(137,203,77,.6)"></div><div class="ct" style="left:673.0px;top:220.5px">8</div><div class="cl" style="left:763.5px;top:190.3px;width:32px;height:32px;background:rgba(184,223,150,.6)"></div><div class="cl" style="left:767.0px;top:193.8px;width:25px;height:25px;background:rgba(137,203,77,.6)"></div><div class="ct" style="left:763.5px;top:201.3px">3</div><div class="a" style="left:525.5px;top:102.0px;width:20px;height:8px;border-radius:50%;background:rgba(0,0,0,.2);filter:blur(2.8px);transform:rotate(-48deg)"></div><svg style="left:511.8px;top:84.0px" width="21.4" height="33" viewBox="0 0 21.4 33"><defs><linearGradient id="mg" x1="0" y1="0" x2="0" y2="1"><stop offset="0" stop-color="#5d9ad6"/><stop offset="1" stop-color="#2b6dbd"/></linearGradient></defs><path d="M10.7,32.6 C9,27 0.6,19 0.6,10.8 C0.6,4.8 5,0.5 10.7,0.5 C16.4,0.5 20.8,4.8 20.8,10.8 C20.8,19 12.4,27 10.7,32.6 Z" fill="url(#mg)" stroke="#2f6aae" stroke-width="0.8"/><circle cx="10.7" cy="10.6" r="3.6" fill="#fff"/></svg><div class="a" style="left:596.4px;top:87.9px;width:20px;height:8px;border-radius:50%;background:rgba(0,0,0,.2);filter:blur(2.8px);transform:rotate(-48deg)"></div><svg style="left:582.7px;top:69.9px" width="21.4" height="33" viewBox="0 0 21.4 33"><defs><linearGradient id="mg" x1="0" y1="0" x2="0" y2="1"><stop offset="0" stop-color="#5d9ad6"/><stop offset="1" stop-color="#2b6dbd"/></linearGradient></defs><path d="M10.7,32.6 C9,27 0.6,19 0.6,10.8 C0.6,4.8 5,0.5 10.7,0.5 C16.4,0.5 20.8,4.8 20.8,10.8 C20.8,19 12.4,27 10.7,32.6 Z" fill="url(#mg)" stroke="#2f6aae" stroke-width="0.8"/><circle cx="10.7" cy="10.6" r="3.6" fill="#fff"/></svg><div class="a" style="left:573.8px;top:311.5px;width:20px;height:8px;border-radius:50%;background:rgba(0,0,0,.2);filter:blur(2.8px);transform:rotate(-48deg)"></div><svg style="left:560.1px;top:293.5px" width="21.4" height="33" viewBox="0 0 21.4 33"><defs><linearGradient id="mg" x1="0" y1="0" x2="0" y2="1"><stop offset="0" stop-color="#5d9ad6"/><stop offset="1" stop-color="#2b6dbd"/></linearGradient></defs><path d="M10.7,32.6 C9,27 0.6,19 0.6,10.8 C0.6,4.8 5,0.5 10.7,0.5 C16.4,0.5 20.8,4.8 20.8,10.8 C20.8,19 12.4,27 10.7,32.6 Z" fill="url(#mg)" stroke="#2f6aae" stroke-width="0.8"/><circle cx="10.7" cy="10.6" r="3.6" fill="#fff"/></svg><div class="a" style="left:8.400000000000006px;top:9px;width:21.2px;height:43px;background:#fff;border-radius:3px;box-shadow:0 1px 4px rgba(0,0,0,.45)"></div><div class="a" style="left:8.400000000000006px;top:30px;width:21.2px;height:1px;background:#ccc"></div><div class="a" style="left:14.600000000000005px;top:19.2px;width:9px;height:1.8px;background:#000"></div><div class="a" style="left:18.200000000000006px;top:15.6px;width:1.8px;height:9px;background:#000"></div><div class="a" style="left:15.400000000000006px;top:41px;width:7.4px;height:1.8px;background:#000"></div><div class="a" style="left:461.29999999999995px;top:204.39999999999998px;width:220px;height:83.7px;background:#fff;border-radius:10px;box-shadow:0 2px 8px rgba(0,0,0,.35)"></div><svg style="left:563.3px;top:287.59999999999997px" width="16" height="8.5" viewBox="0 0 16 8.5"><path d="M0,0 L16,0 L8,8 Z" fill="#fff"/></svg><svg style="left:667.9px;top:209.79999999999998px" width="7.5" height="7.5" viewBox="0 0 7.5 7.5"><path d="M0.6,0.6 L6.9,6.9 M6.9,0.6 L0.6,6.9" stroke="#b5b5b5" stroke-width="1.1"/></svg></div>
<div class="a" style="left:1304px;top:311px;width:208px;height:416px;background:#52a462"></div>
<svg style="left:1392.1px;top:333.1px" width="32" height="32" viewBox="0 0 32 32"><circle cx="16" cy="16" r="16" fill="#fff"/><path d="M7.9,5.15 L10.3,3.6 L16.5,2.2 L19.9,3.3 L21.6,4.5 L19.6,5.7 L20.6,7.2 L22.7,9.3 L19.9,10.3 L18.5,13 L17.2,17.2 L16.5,18.5 L15.1,17.9 L14.4,17.2 L12.7,16.5 L11.7,17.5 L14.4,19.2 L16.8,22 L15.1,22 L11,19.9 L7.9,18.2 L6.9,15.1 L6.2,11.3 L7.6,7.2 Z M13.7,6.2 L16.5,5.5 L16.8,7.9 L14,7.6 Z" fill="#52a462" fill-rule="evenodd"/><path d="M16.8,22 L19.9,21.1 L23,21.1 L27.5,22.7 L25.8,26.1 L22.7,28.8 L19.2,29.9 L17.9,28.2 L16.5,26.1 L16.8,24 Z" fill="#52a462"/></svg><svg style="left:1392px;top:460.5px" width="35" height="35" viewBox="0 0 35 35"><path d="M17.8,0.2 L35,17.2 L30,17.2 L30,34.6 L22.5,34.6 L22.5,23.6 L12.2,23.6 L12.2,34.6 L4.9,34.6 L4.9,17.2 L0.2,17.2 Z" fill="#fff"/></svg><svg style="left:1392px;top:592px" width="32" height="32" viewBox="0 0 32 32"><circle cx="16" cy="16" r="13.8" fill="none" stroke="#fff" stroke-width="4.2"/><path d="M14.8,8 L14.8,17.9 L21.4,17.9" fill="none" stroke="#fff" stroke-width="3.2"/></svg>

<!-- updates -->
<div class="a" style="left:216px;top:744px;width:1296px;height:377px;background:#fff;border-top:1px solid #d2d6de;border-radius:3px;box-shadow:0 1px 1px rgba(0,0,0,.08)"></div>
<div class="a" style="left:231px;top:761px;width:1266px;height:345px;background:#fff;border-radius:2px;box-shadow:0 0 9px 2px rgba(0,0,0,.045),0 1px 3px rgba(0,0,0,.28)"></div>
<svg style="left:306.5px;top:831px" width="14" height="13" viewBox="0 0 14 13"><path d="M7,0.5 L7,12 M1.5,6.6 L7,12 L12.5,6.6" fill="none" stroke="#222" stroke-width="1.6"/></svg><div class="row" style="top:860.7px"></div><div class="row" style="top:900.7px"></div><div class="row" style="top:940.4px"></div><div class="row" style="top:980.1px"></div><div class="row" style="top:1019.8px"></div><div class="row" style="top:1059.7px"></div><svg style="left:1346px;top:1077px" width="140" height="12" viewBox="0 0 140 12"><g fill="none" stroke="#555" stroke-width="1.5"><path d="M2.3,1 L2.3,11"/><path d="M10.5,1.5 L6,6 L10.5,10.5"/><path d="M48.5,1.5 L44,6 L48.5,10.5"/><path d="M84,1.5 L88.5,6 L84,10.5"/><path d="M122.3,1.5 L126.8,6 L122.3,10.5"/><path d="M130.5,1 L130.5,11"/></g></svg><div class="t" style="left:57.40px;top:13.65px;font-size:16.6px;color:#eef3f8;transform:scaleX(0.9145);transform-origin:0 0;-webkit-text-stroke:0.4px #4d80ad">Your Brand</div><div class="t" style="left:1423.00px;top:15.15px;font-size:11.4px;color:#fff;transform:scaleX(0.9492);transform-origin:0 0">user@corporate.com</div><div class="t" style="left:58.60px;top:55.30px;font-size:10.4px;color:#fff;font-weight:700;transform:scaleX(0.9957);transform-origin:0 0">user@corporate.com</div><div class="t" style="left:70.70px;top:74.89px;font-size:8.4px;color:#fff;transform:scaleX(1.0090);transform-origin:0 0">Online</div><div class="t" style="left:12.60px;top:107.12px;font-size:9.9px;color:#4b646f;transform:scaleX(0.9530);transform-origin:0 0">Shipments</div><div class="t" style="left:12.60px;top:244.82px;font-size:9.9px;color:#4b646f;transform:scaleX(0.9530);transform-origin:0 0">Orders</div><div class="t" style="left:12.60px;top:346.82px;font-size:9.9px;color:#4b646f;transform:scaleX(0.9530);transform-origin:0 0">Management</div><div class="t" style="left:34.60px;top:140.51px;font-size:10.5px;color:#fff">Dashboard</div><div class="t" style="left:34.60px;top:176.51px;font-size:10.5px;color:#b8c7ce">List Shipments</div><div class="t" style="left:34.60px;top:212.51px;font-size:10.5px;color:#b8c7ce">New Shipment</div><div class="t" style="left:34.60px;top:278.51px;font-size:10.5px;color:#b8c7ce">List Orders</div><div class="t" style="left:34.60px;top:314.51px;font-size:10.5px;color:#b8c7ce">New Order</div><div class="t" style="left:34.60px;top:380.51px;font-size:10.5px;color:#b8c7ce">Customers Management</div><div class="t" style="left:34.60px;top:416.51px;font-size:10.5px;color:#b8c7ce">Users</div><div class="t" style="left:34.60px;top:452.51px;font-size:10.5px;color:#b8c7ce">Trackers</div><div class="t" style="left:204.90px;top:55.75px;font-size:19.2px;color:#333;transform:scaleX(0.9391);transform-origin:0 0">Home</div><div class="t" style="left:1437.10px;top:61.93px;font-size:9.3px;color:#333;transform:scaleX(0.9693);transform-origin:0 0">Dashboard</div><div class="t" style="left:1486.30px;top:62.53px;font-size:8.0px;color:#c4c4c4">&gt;</div><div class="t" style="left:1500.00px;top:61.93px;font-size:9.3px;color:#333;transform:scaleX(0.9755);transform-origin:0 0">Home</div><div class="t" style="left:300.00px;top:107.32px;font-size:11.2px;color:#383838;transform:scaleX(0.8680);transform-origin:0 0">ON A PLANE</div><div class="t" style="left:300.00px;top:124.20px;font-size:13.7px;color:#222;font-weight:700;transform:scaleX(0.9700);transform-origin:0 0">2</div><div class="t" style="left:630.30px;top:107.32px;font-size:11.2px;color:#383838;transform:scaleX(0.8680);transform-origin:0 0">ON A TRUCK</div><div class="t" style="left:630.30px;top:124.20px;font-size:13.7px;color:#222;font-weight:700;transform:scaleX(0.9700);transform-origin:0 0">0</div><div class="t" style="left:960.50px;top:107.32px;font-size:11.2px;color:#383838;transform:scaleX(0.8680);transform-origin:0 0">ON A SHIP</div><div class="t" style="left:960.50px;top:124.20px;font-size:13.7px;color:#222;font-weight:700;transform:scaleX(0.9700);transform-origin:0 0">2</div><div class="t" style="left:1290.80px;top:107.32px;font-size:11.2px;color:#383838;transform:scaleX(0.8680);transform-origin:0 0">IN A SEAPORT</div><div class="t" style="left:1290.80px;top:124.20px;font-size:13.7px;color:#222;font-weight:700;transform:scaleX(0.9700);transform-origin:0 0">2</div><div class="t" style="left:300.00px;top:194.32px;font-size:11.2px;color:#383838;transform:scaleX(0.8680);transform-origin:0 0">IN AN AIRPORT</div><div class="t" style="left:300.00px;top:211.20px;font-size:13.7px;color:#222;font-weight:700;transform:scaleX(0.9700);transform-origin:0 0">0</div><div class="t" style="left:630.30px;top:194.32px;font-size:11.2px;color:#383838;transform:scaleX(0.8680);transform-origin:0 0">IN A WAREHOUSE</div><div class="t" style="left:630.30px;top:211.20px;font-size:13.7px;color:#222;font-weight:700;transform:scaleX(0.9700);transform-origin:0 0">105</div><div class="t" style="left:960.50px;top:194.32px;font-size:11.2px;color:#383838;transform:scaleX(0.8680);transform-origin:0 0">WAITING FOR PICKUP</div><div class="t" style="left:960.50px;top:211.20px;font-size:13.7px;color:#222;font-weight:700;transform:scaleX(0.9700);transform-origin:0 0">0</div><div class="t" style="left:1290.80px;top:194.32px;font-size:11.2px;color:#383838;transform:scaleX(0.8680);transform-origin:0 0">DELIVERED IN LAST 24 HOURS</div><div class="t" style="left:1290.80px;top:211.20px;font-size:13.7px;color:#222;font-weight:700;transform:scaleX(0.9700);transform-origin:0 0">0</div><div class="t" style="left:225.40px;top:286.03px;font-size:14.5px;color:#444;transform:scaleX(0.9246);transform-origin:0 0">Packages Locations Map</div><div class="t" style="left:1323.40px;top:288.07px;font-size:10.2px;color:#8c90a4;font-weight:700;transform:scaleX(0.9075);transform-origin:0 0">last updated:</div><div class="t" style="left:1384.70px;top:288.07px;font-size:10.2px;color:#8c90a4;font-weight:700;font-style:italic;transform:scaleX(0.9140);transform-origin:0 0">a few seconds ago</div><div class="t" style="left:1389.90px;top:381.98px;font-size:22.0px;color:#fff;font-weight:700;transform:scaleX(1.0243);transform-origin:0 0">109</div><div class="t" style="left:1390.00px;top:511.58px;font-size:22.0px;color:#fff;font-weight:700;transform:scaleX(1.0080);transform-origin:0 0">100</div><div class="t" style="left:1395.40px;top:641.48px;font-size:22.0px;color:#fff;font-weight:700;transform:scaleX(1.0543);transform-origin:0 0">40</div><div class="t" style="left:1384.25px;top:409.63px;font-size:15.8px;color:#fff;transform:scaleX(0.8358);transform-origin:0 0">ACTIVE</div><div class="t" style="left:1376.95px;top:539.03px;font-size:15.8px;color:#fff;transform:scaleX(0.8654);transform-origin:0 0">PENDING</div><div class="t" style="left:1377.20px;top:668.43px;font-size:15.8px;color:#fff;transform:scaleX(0.8513);transform-origin:0 0">DELAYED</div><div class="t" style="left:251.20px;top:785.44px;font-size:15.55px;color:#333;transform:scaleX(0.9933);transform-origin:0 0">Latest Updates</div><div class="t" style="left:251.20px;top:833.03px;font-size:10.6px;color:#222;font-weight:700;transform:scaleX(0.8786);transform-origin:0 0">Timestamp</div><div class="t" style="left:445.50px;top:833.03px;font-size:10.6px;color:#757575;font-weight:700;transform:scaleX(0.8309);transform-origin:0 0">Package ID</div><div class="t" style="left:655.80px;top:833.03px;font-size:10.6px;color:#757575;font-weight:700;transform:scaleX(0.8661);transform-origin:0 0">Order</div><div class="t" style="left:887.30px;top:833.03px;font-size:10.6px;color:#757575;font-weight:700;transform:scaleX(0.8684);transform-origin:0 0">Update</div><div class="t" style="left:251.20px;top:876.01px;font-size:10.5px;color:#2b2b2b;transform:scaleX(0.9050);transform-origin:0 0">Apr 12, 2021 11:06 PM</div><div class="t" style="left:445.50px;top:876.01px;font-size:10.5px;color:#2b2b2b;transform:scaleX(0.8790);transform-origin:0 0">CAK2Z00344</div><div class="t" style="left:655.80px;top:876.01px;font-size:10.5px;color:#2b2b2b;transform:scaleX(0.8660);transform-origin:0 0">BOX#3493 - SHOLS</div><div class="t" style="left:887.30px;top:876.01px;font-size:10.5px;color:#2b2b2b;transform:scaleX(0.9680);transform-origin:0 0">The package is within 3km from its destination.</div><div class="t" style="left:251.20px;top:915.81px;font-size:10.5px;color:#2b2b2b;transform:scaleX(0.9050);transform-origin:0 0">Apr 12, 2021 3:03 PM</div><div class="t" style="left:445.50px;top:915.81px;font-size:10.5px;color:#2b2b2b;transform:scaleX(0.8790);transform-origin:0 0">CAK3D00342</div><div class="t" style="left:655.80px;top:915.81px;font-size:10.5px;color:#2b2b2b;transform:scaleX(0.8660);transform-origin:0 0">BOX#3536 - Tygate xDIS</div><div class="t" style="left:887.30px;top:915.81px;font-size:10.5px;color:#2b2b2b;transform:scaleX(0.9465);transform-origin:0 0">The package is now in Netherlands.</div><div class="t" style="left:251.20px;top:955.61px;font-size:10.5px;color:#2b2b2b;transform:scaleX(0.9050);transform-origin:0 0">Apr 12, 2021 2:51 PM</div><div class="t" style="left:445.50px;top:955.61px;font-size:10.5px;color:#2b2b2b;transform:scaleX(0.8790);transform-origin:0 0">CAK9X00342</div><div class="t" style="left:655.80px;top:955.61px;font-size:10.5px;color:#2b2b2b;transform:scaleX(0.8660);transform-origin:0 0">BOX#3531 - Tygate EXT#1</div><div class="t" style="left:887.30px;top:955.61px;font-size:10.5px;color:#2b2b2b;transform:scaleX(0.9465);transform-origin:0 0">The package is now in Netherlands.</div><div class="t" style="left:251.20px;top:995.41px;font-size:10.5px;color:#2b2b2b;transform:scaleX(0.9050);transform-origin:0 0">Apr 12, 2021 2:40 PM</div><div class="t" style="left:445.50px;top:995.41px;font-size:10.5px;color:#2b2b2b;transform:scaleX(0.8790);transform-origin:0 0">CAK0B00342</div><div class="t" style="left:655.80px;top:995.41px;font-size:10.5px;color:#2b2b2b;transform:scaleX(0.8660);transform-origin:0 0">BOX#3536 - Tygate iNOD</div><div class="t" style="left:887.30px;top:995.41px;font-size:10.5px;color:#2b2b2b;transform:scaleX(0.9465);transform-origin:0 0">The package is now in Netherlands.</div><div class="t" style="left:251.20px;top:1035.21px;font-size:10.5px;color:#2b2b2b;transform:scaleX(0.9050);transform-origin:0 0">Apr 12, 2021 2:32 PM</div><div class="t" style="left:445.50px;top:1035.21px;font-size:10.5px;color:#2b2b2b;transform:scaleX(0.8790);transform-origin:0 0">CAK2Z00343</div><div class="t" style="left:655.80px;top:1035.21px;font-size:10.5px;color:#2b2b2b;transform:scaleX(0.8660);transform-origin:0 0">BOX#3536 - Tygate EXT#2</div><div class="t" style="left:887.30px;top:1035.21px;font-size:10.5px;color:#2b2b2b;transform:scaleX(0.9465);transform-origin:0 0">The package is now in Netherlands.</div><div class="t" style="left:1262.20px;top:1077.93px;font-size:10.6px;color:#6b6b6b;transform:scaleX(0.8231);transform-origin:0 0">11 - 15 of 142</div><div class="t" style="left:694.50px;top:528.93px;font-size:9.65px;color:#3d80b8">CAK2Z00341</div><div class="t" style="left:694.50px;top:557.74px;font-size:10.0px;color:#333">BOX#3528 - Silicon Valley - icode 400 -</div><div class="t" style="left:694.50px;top:571.53px;font-size:10.0px;color:#333">xNOD</div><div class="t" style="left:1369.00px;top:9.21px;font-size:7.2px;color:#fff;font-weight:700">2</div>

<div class="a" style="left:191px;top:1162px;width:1345px;height:3px;background:#fff;border-top:1px solid #d2d6de"></div>
</body></html>
